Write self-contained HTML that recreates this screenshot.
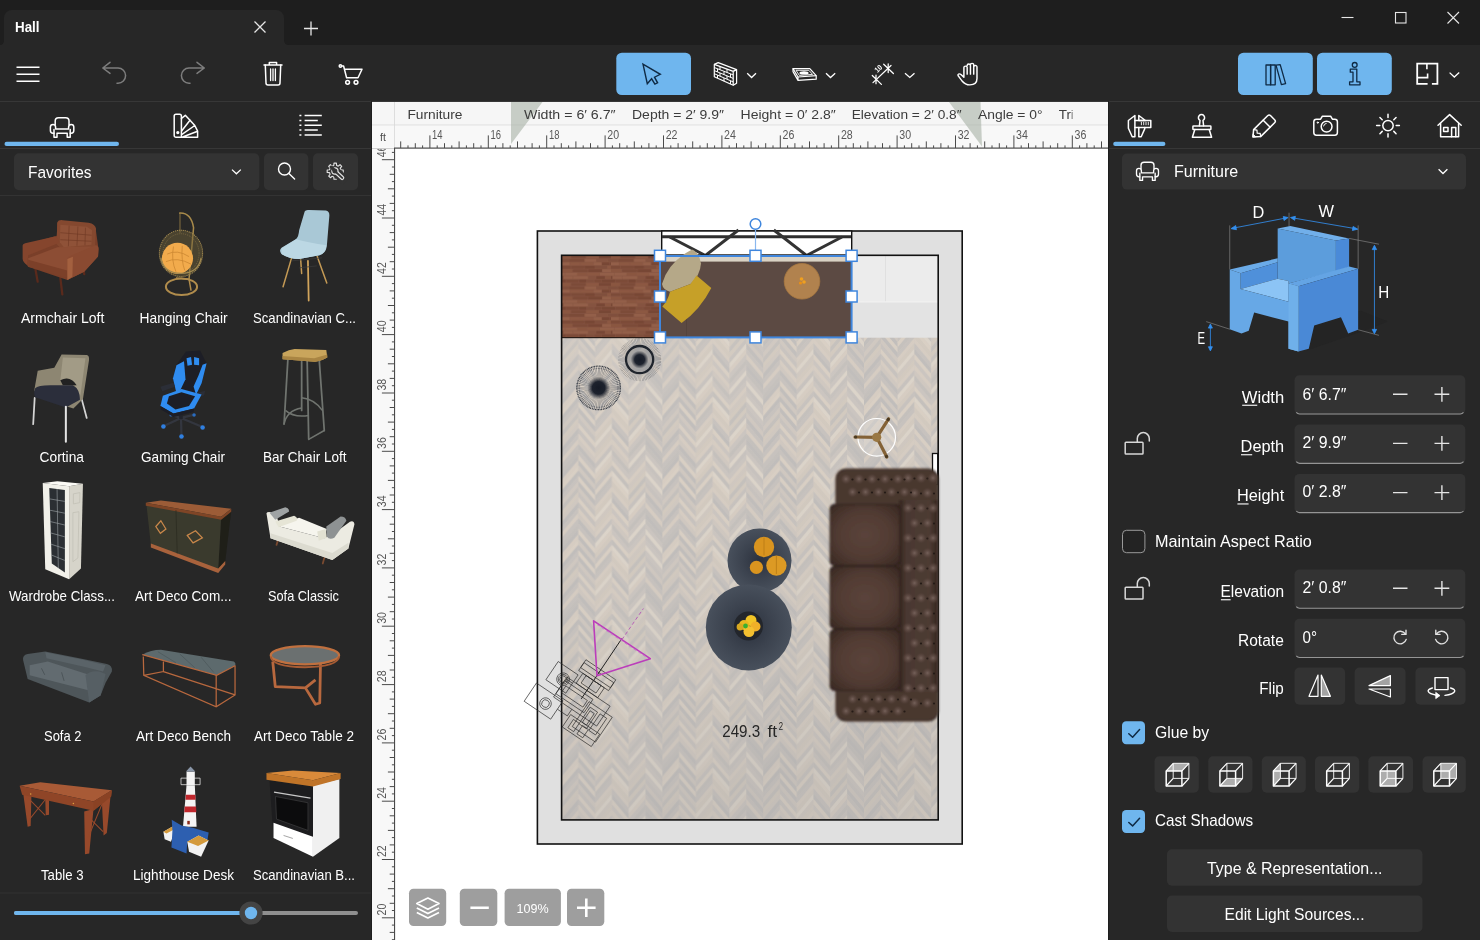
<!DOCTYPE html>
<html>
<head>
<meta charset="utf-8">
<title>Hall</title>
<style>
html,body{margin:0;padding:0;background:#272727;}
body{width:1480px;height:940px;overflow:hidden;}
svg{display:block;will-change:transform;}
svg text{font-family:"Liberation Sans",sans-serif;}
</style>
</head>
<body>
<svg width="1480" height="940" viewBox="0 0 1480 940">
<rect x="0" y="0" width="1480" height="940" fill="#272727"/>
<!-- chrome -->
<rect x="0.00" y="0.00" width="1480.00" height="45.00" fill="#1e1e1e" />
<path d="M0 45 Q4 45 4 40 V18 a8 8 0 0 1 8 -8 H276 a8 8 0 0 1 8 8 V40 Q284 45 289 45 Z" fill="#272727"/>
<text x="15.00" y="32.30" font-size="14.00" fill="#fff" font-weight="bold" textLength="24.50" lengthAdjust="spacingAndGlyphs" >Hall</text>
<path d="M254.5 21.5 l11 11 M265.5 21.5 l-11 11" stroke="#e6e6e6" stroke-width="1.3" fill="none"/>
<path d="M304 28.5 h14 M311 21.5 v14" stroke="#e6e6e6" stroke-width="1.3" fill="none"/>
<path d="M1341.5 17.5 h12" stroke="#e6e6e6" stroke-width="1.1"/>
<rect x="1395.5" y="12.5" width="10.5" height="10.5" fill="none" stroke="#e6e6e6" stroke-width="1.1"/>
<path d="M1447.5 12 l11.5 11.5 M1459 12 l-11.5 11.5" stroke="#e6e6e6" stroke-width="1.1" fill="none"/>
<rect x="0.00" y="45.00" width="1480.00" height="56.00" fill="#272727" />
<rect x="0.00" y="101.00" width="1480.00" height="1.00" fill="#373737" />
<path d="M16.5 67.3 h23 M16.5 74.3 h23 M16.5 81.3 h23" stroke="#fff" stroke-width="1.6"/>
<path d="M110 62.3 L102.8 68 L110 73.4 M103 68 H118 A7.6 7.6 0 0 1 118 83.2 H117" stroke="#7d7d7d" stroke-width="1.5" fill="none" stroke-linecap="round" stroke-linejoin="round"/>
<path d="M197 62.3 L204.3 68 L197 73.4 M204 68 H189 A7.6 7.6 0 0 0 189 83.2 H190" stroke="#7d7d7d" stroke-width="1.5" fill="none" stroke-linecap="round" stroke-linejoin="round"/>
<g stroke="#fff" stroke-width="1.5" fill="none" stroke-linejoin="round" stroke-linecap="round"><path d="M264 65 H282 M269.3 65 V62.6 H276.6 V65"/><path d="M265.3 65 L266 83 a2 2 0 0 0 2 2 H278 a2 2 0 0 0 2 -2 L280.7 65"/><path d="M270.6 69 V80.5 M273 69 V80.5 M275.4 69 V80.5" stroke-width="1.3"/></g>
<g stroke="#fff" stroke-width="1.5" fill="none" stroke-linejoin="round" stroke-linecap="round"><circle cx="340.4" cy="66" r="1.2"/><path d="M341.6 66 H343.6 L346.6 77.7 H358 L362 69.2 H344.6"/><circle cx="347.6" cy="82.3" r="1.9"/><circle cx="356" cy="82.3" r="1.9"/></g>
<rect x="616.30" y="52.70" width="74.70" height="42.30" fill="#6fb6ee" rx="5.50" />
<path d="M643 64.2 L647.3 83.7 L651.6 78.8 L654.9 84.2 L657.6 82.8 L654.5 77.2 L660.3 74.3 Z" stroke="#0f2a44" stroke-width="1.4" fill="none" stroke-linejoin="miter"/>
<g stroke="#fff" stroke-width="1.2" fill="none" stroke-linejoin="round"><path d="M714.3 64.4 L733.2 71.4 V85.3 L714.3 76.8 Z"/><path d="M714.3 64.4 L718.2 62.6 L736.6 69.6 L733.2 71.4 M736.6 69.6 V83.2 L733.2 85.3"/><path d="M714.3 67.5 L733.2 74.9 M714.3 70.6 L733.2 78.4 M714.3 73.7 L733.2 81.9" stroke-width="1"/><path d="M720 66.5 v3.2 M727 69.2 v3.2 M717.5 68.8 v3.1 M724 71.5 v3.2 M730.5 74 v3.3 M720 73 v3.1 M727 75.8 v3.2 M717.5 75.2 v3 M724 78 v3.2 M730.5 80.8 v3.2" stroke-width="1"/></g>
<path d="M747.2 73.3 L751.6 77.5 L756 73.3" stroke="#fff" stroke-width="1.3" fill="none"/>
<g stroke="#fff" stroke-width="1.2" fill="none" stroke-linejoin="round"><path d="M793 68.6 H809.8 L816.2 75.6 L798 77 Z"/><path d="M793 68.6 V71.6 L798 80.4 V77 M798 80.4 L816.2 79.2 V75.6"/><path d="M796 70.3 H808.8 L812.6 74.4 L799.3 75.4 Z" stroke-width="0.9"/><ellipse cx="804" cy="72.9" rx="4.6" ry="1.7" fill="#fff" stroke="none"/></g>
<path d="M826 73.3 L830.5 77.5 L835.2 73.3" stroke="#fff" stroke-width="1.3" fill="none"/>
<g stroke="#fff" stroke-width="1.25" fill="none" stroke-linecap="round"><path d="M873 82.6 L891 65.5"/><path d="M883.7 64.2 L893.4 73.5 M888.2 63.8 V72.6"/><path d="M872.3 75.5 L881.4 84.4 M876 75 V83.7"/></g>
<text x="0" y="0" font-size="7.6" fill="#fff" font-weight="bold" textLength="7.4" lengthAdjust="spacingAndGlyphs" transform="translate(877.6,73) rotate(-45)">10</text>
<path d="M905 73.3 L909.8 77.5 L914.5 73.3" stroke="#fff" stroke-width="1.3" fill="none"/>
<g transform="translate(967.5 74.5) scale(1.09 0.97) translate(-966.8 -74.3)" stroke="#fff" stroke-width="1.35" fill="none" stroke-linecap="round" stroke-linejoin="round"><path d="M963.5 76.5 V67.2 a1.5 1.5 0 0 1 3 0 V74 M966.5 65 a1.5 1.5 0 0 1 3 0 V74 M969.5 64.3 a1.5 1.5 0 0 1 3 0 V74 M972.5 66.5 a1.5 1.5 0 0 1 3 0 V78.5 C975.5 82.5 973.5 85 969 85 C965.5 85 963.8 83.8 961.8 81 L958.3 75.8 C957.3 74 959.3 72.8 960.8 74.3 L963.5 77.2"/></g>
<rect x="1238.00" y="52.70" width="74.80" height="42.30" fill="#6fb6ee" rx="5.50" />
<rect x="1317.00" y="52.70" width="74.80" height="42.30" fill="#6fb6ee" rx="5.50" />
<g stroke="#0f2a44" stroke-width="1.3" fill="none" stroke-linejoin="round"><rect x="1266" y="65" width="4.6" height="19.8"/><rect x="1270.6" y="65" width="4.6" height="19.8"/><path d="M1276 65.2 L1280.2 64.6 L1285.6 83.6 L1281.4 84.6 Z"/></g>
<g stroke="#0f2a44" stroke-width="1.3" fill="none" stroke-linejoin="round"><circle cx="1354.7" cy="64.9" r="2.4"/><path d="M1350.3 69.2 H1356.8 V81.8 H1360 V84.8 H1349.6 V81.8 H1353 V72.2 H1350.3 Z"/></g>
<g stroke="#fff" stroke-width="1.8" fill="none" stroke-linejoin="miter"><path d="M1431.9 83.8 H1437.4 V63.6 H1417.2 V83.8 H1427.6"/><path d="M1426.9 63.6 V69.2 M1417.2 77.6 H1427.6 V73.6" stroke-width="1.6"/></g>
<path d="M1449.6 72.6 L1454.3 77 L1459.2 72.6" stroke="#fff" stroke-width="1.3" fill="none"/>
<!-- leftp -->
<g stroke="#fff" stroke-width="1.5" fill="none" stroke-linejoin="round" stroke-linecap="round"><path d="M55.2 124.5 V121 a3.3 3.3 0 0 1 3.3 -3.3 H65.7 a3.3 3.3 0 0 1 3.3 3.3 V124.5"/><path d="M54 133.2 H53 a2.6 2.6 0 0 1 -2.6 -2.6 V127 a2.6 2.6 0 0 1 5.2 0 V129 H68.6 V127 a2.6 2.6 0 0 1 5.2 0 V130.6 a2.6 2.6 0 0 1 -2.6 2.6 H70.2"/><path d="M54 129.5 V137.3 H57 V133.2 H67.2 V137.3 H70.2 V129.5"/></g>
<g stroke="#fff" stroke-width="1.5" fill="none" stroke-linejoin="round" stroke-linecap="round"><path d="M174.2 116 a1.8 1.8 0 0 1 1.8 -1.8 H179.6 a1.8 1.8 0 0 1 1.8 1.8 V137.3 H176 a1.8 1.8 0 0 1 -1.8 -1.8 Z"/><circle cx="177.8" cy="132.6" r="0.9" fill="#fff"/><path d="M181.4 118.5 L185.3 115.3 L190 120.2 L181.6 131"/><path d="M190 120.2 L194.8 125.5 L182 134.3 M194.8 125.5 L197.6 131.2 V137.3 H181.4 M197.6 131.2 L182.6 137"/></g>
<path d="M299.4 115.6 h2 M304.6 115.6 H321.8 M299.4 120.4 h2 M304.6 120.4 H317.8 M299.4 125.3 h2 M304.6 125.3 H321.8 M299.4 130.1 h2 M304.6 130.1 H317.8 M299.4 134.9 h2 M304.6 134.9 H321.8 " stroke="#fff" stroke-width="1.5" fill="none"/>
<rect x="4.50" y="141.80" width="114.50" height="4.20" fill="#6fb6ee" rx="2.10" />
<rect x="0.00" y="148.00" width="371.00" height="1.00" fill="#373737" />
<rect x="14.00" y="153.30" width="245.30" height="37.00" fill="#333333" rx="5.00" />
<text x="28.00" y="178.00" font-size="16.30" fill="#fff" textLength="63.50" lengthAdjust="spacingAndGlyphs" >Favorites</text>
<path d="M232 169.6 L236.4 173.8 L240.8 169.6" stroke="#fff" stroke-width="1.3" fill="none"/>
<rect x="264.00" y="153.30" width="44.30" height="37.00" fill="#333333" rx="5.00" />
<g stroke="#fff" stroke-width="1.4" fill="none" stroke-linecap="round"><circle cx="284.5" cy="169" r="6"/><path d="M288.9 173.4 L294.6 179"/></g>
<rect x="313.00" y="153.30" width="45.00" height="37.00" fill="#333333" rx="5.00" />
<g stroke="#e2e2e2" fill="none" stroke-linecap="round" stroke-linejoin="round"><path d="M340.92 169.77 L343.21 170.00 L343.21 172.40 L340.92 172.63 L340.26 174.24 L341.71 176.02 L340.02 177.71 L338.24 176.26 L336.63 176.92 L336.40 179.21 L334.00 179.21 L333.77 176.92 L332.16 176.26 L330.38 177.71 L328.69 176.02 L330.14 174.24 L329.48 172.63 L327.19 172.40 L327.19 170.00 L329.48 169.77 L330.14 168.16 L328.69 166.38 L330.38 164.69 L332.16 166.14 L333.77 165.48 L334.00 163.19 L336.40 163.19 L336.63 165.48 L338.24 166.14 L340.02 164.69 L341.71 166.38 L340.26 168.16 Z" stroke-width="1.15"/><path d="M337 173 L346 181.2" stroke="#333333" stroke-width="9.5" stroke-linecap="butt"/><path d="M336.3 172.4 L342.2 177.9" stroke="#333333" stroke-width="6.4"/><path d="M336.3 172.4 L342.2 177.9" stroke="#e2e2e2" stroke-width="4.2"/><path d="M336.3 172.4 L342.2 177.9" stroke="#333333" stroke-width="1.9"/><circle cx="334.9" cy="171" r="3.1" fill="#333333" stroke-width="1.15"/><path d="M334.9 171 L330.6 166.4" stroke="#333333" stroke-width="3.3" stroke-linecap="butt"/><path d="M335.6 171.8 L337.2 173.2" stroke="#333333" stroke-width="1.9"/></g>
<rect x="0.00" y="195.00" width="371.00" height="1.00" fill="#333333" />
<text x="21.00" y="322.60" font-size="14.30" fill="#fff" textLength="83.30" lengthAdjust="spacingAndGlyphs" >Armchair Loft</text>
<text x="139.50" y="322.60" font-size="14.30" fill="#fff" textLength="88.20" lengthAdjust="spacingAndGlyphs" >Hanging Chair</text>
<text x="253.00" y="322.60" font-size="14.30" fill="#fff" textLength="103.00" lengthAdjust="spacingAndGlyphs" >Scandinavian C...</text>
<text x="39.60" y="462.10" font-size="14.30" fill="#fff" textLength="44.40" lengthAdjust="spacingAndGlyphs" >Cortina</text>
<text x="141.00" y="462.10" font-size="14.30" fill="#fff" textLength="84.00" lengthAdjust="spacingAndGlyphs" >Gaming Chair</text>
<text x="263.00" y="462.10" font-size="14.30" fill="#fff" textLength="83.50" lengthAdjust="spacingAndGlyphs" >Bar Chair Loft</text>
<text x="9.00" y="601.10" font-size="14.30" fill="#fff" textLength="106.00" lengthAdjust="spacingAndGlyphs" >Wardrobe Class...</text>
<text x="135.00" y="601.10" font-size="14.30" fill="#fff" textLength="96.50" lengthAdjust="spacingAndGlyphs" >Art Deco Com...</text>
<text x="268.00" y="601.10" font-size="14.30" fill="#fff" textLength="71.00" lengthAdjust="spacingAndGlyphs" >Sofa Classic</text>
<text x="44.00" y="740.60" font-size="14.30" fill="#fff" textLength="37.50" lengthAdjust="spacingAndGlyphs" >Sofa 2</text>
<text x="136.00" y="740.60" font-size="14.30" fill="#fff" textLength="95.00" lengthAdjust="spacingAndGlyphs" >Art Deco Bench</text>
<text x="254.00" y="740.60" font-size="14.30" fill="#fff" textLength="100.00" lengthAdjust="spacingAndGlyphs" >Art Deco Table 2</text>
<text x="41.00" y="880.10" font-size="14.30" fill="#fff" textLength="42.50" lengthAdjust="spacingAndGlyphs" >Table 3</text>
<text x="133.00" y="880.10" font-size="14.30" fill="#fff" textLength="101.00" lengthAdjust="spacingAndGlyphs" >Lighthouse Desk</text>
<text x="253.00" y="880.10" font-size="14.30" fill="#fff" textLength="102.00" lengthAdjust="spacingAndGlyphs" >Scandinavian B...</text>
<rect x="0.00" y="892.50" width="371.00" height="1.00" fill="#333333" />
<rect x="14.00" y="911.00" width="344.00" height="4.00" fill="#8f8f8f" rx="2.00" />
<rect x="14.00" y="911.00" width="237.00" height="4.00" fill="#6fb6ee" rx="2.00" />
<circle cx="251" cy="913" r="11.6" fill="#444444"/><circle cx="251" cy="913" r="6.2" fill="#6fb6ee"/>
<g transform="translate(0,195) scale(0.25138)"><g><path d="M140 290 L150 345 M240 330 L248 395 M330 270 L335 315" stroke="#5a2a1c" stroke-width="9" stroke-linecap="round"/><path d="M92 200 L226 162 L228 110 L380 130 L392 215 L390 245 L335 305 L268 338 L112 285 L92 258 Z" fill="#7a3f29"/><path d="M228 108 Q232 98 250 100 L352 110 Q380 115 382 135 L378 205 L250 222 L225 195 Z" fill="#84482f"/><path d="M240 118 L345 126 L366 140 L364 198 L254 208 L238 188 Z" fill="#8f5238"/><path d="M275 122 L272 204 M310 125 L306 202 M340 130 L338 200 M240 150 L364 160 M240 178 L364 184" stroke="#6e3824" stroke-width="2.5" fill="none"/><path d="M112 252 L228 208 L380 205 L282 252 L268 322 L112 282 Z" fill="#8c4d34"/><path d="M112 258 L268 300 L268 330 L112 285 Z" fill="#7c4029"/><path d="M90 205 Q88 195 100 192 L218 165 Q232 165 236 190 L112 240 L108 278 Q92 270 90 255 Z" fill="#85452d"/><path d="M268 252 Q270 245 285 240 L380 200 Q392 200 392 215 L390 245 L335 305 L268 338 Z" fill="#8a4a31"/><path d="M268 255 L290 246 L288 325 L268 338 Z" fill="#a3603f"/></g><g fill="none"><path d="M715 72 Q760 70 770 130 L752 335" stroke="#a88a4a" stroke-width="6" stroke-linecap="round"/><path d="M716 72 V150" stroke="#a88a4a" stroke-width="3"/><ellipse cx="722" cy="365" rx="62" ry="33" stroke="#b08c4c" stroke-width="8"/><path d="M700 330 L752 335 L760 380" stroke="#b08c4c" stroke-width="6"/><ellipse cx="720" cy="232" rx="86" ry="92" fill="#6e6038" fill-opacity="0.5" stroke="#a08850" stroke-width="4" stroke-dasharray="5 3"/><ellipse cx="720" cy="232" rx="72" ry="78" stroke="#9a8250" stroke-width="2" stroke-dasharray="4 4" /><ellipse cx="706" cy="252" rx="62" ry="62" fill="#f2ab4c"/><path d="M665 235 Q705 215 752 245 M660 265 Q705 245 760 275 M690 205 Q680 260 700 305 M725 202 Q720 260 735 300" stroke="#c98530" stroke-width="3"/><path d="M640 250 Q650 310 720 312 Q790 310 800 250" stroke="#a08850" stroke-width="5"/></g><g><path d="M1160 250 L1126 365 M1262 245 L1300 350 M1196 255 L1200 312" stroke="#c49a55" stroke-width="6" stroke-linecap="round"/><path d="M1225 262 L1228 420" stroke="#d2a55c" stroke-width="7" stroke-linecap="round"/><path d="M1160 262 L1280 250 M1190 290 L1260 282" stroke="#3a3a3a" stroke-width="3"/><path d="M1212 66 Q1215 58 1230 60 L1296 62 Q1312 64 1310 85 L1300 205 Q1296 232 1270 240 L1190 255 Q1150 255 1120 235 Q1108 222 1120 210 L1178 175 Q1188 165 1190 140 Z" fill="#a9c8d6"/><path d="M1120 212 L1178 176 Q1230 190 1298 200 Q1296 232 1270 240 L1190 255 Q1150 255 1120 235 Z" fill="#bcd8e4"/></g></g>
<g transform="translate(0,335) scale(0.25138)"><g><path d="M138 250 L132 355 M325 255 L345 330" stroke="#d4d4d4" stroke-width="7" stroke-linecap="round"/><path d="M245 78 L345 80 Q356 82 354 100 L330 255 L292 292 L162 252 L136 222 L150 142 L216 130 Z" fill="#8d8672"/><path d="M250 90 L340 92 L320 240 L290 270 L300 200 Q280 160 240 180 Z" fill="#a29b86"/><path d="M240 180 Q280 160 305 200 L250 200 Z" fill="#222"/><path d="M140 212 Q150 200 200 200 L290 200 Q318 215 318 258 L262 288 L140 248 Q132 230 140 212 Z" fill="#2b2e3b"/><path d="M262 285 L262 425" stroke="#e4e4e4" stroke-width="8" stroke-linecap="round"/></g><g><path d="M720 330 L652 362 M720 330 L722 402 M720 330 L806 366 M720 330 L770 318 M720 330 L682 318" stroke="#33363f" stroke-width="9" stroke-linecap="round"/><circle cx="650" cy="364" r="9" fill="#2f7fe0"/><circle cx="722" cy="404" r="9" fill="#2f7fe0"/><circle cx="806" cy="368" r="9" fill="#2f7fe0"/><circle cx="772" cy="318" r="7" fill="#2a6cc0"/><circle cx="680" cy="318" r="6" fill="#2a6cc0"/><path d="M720 290 V335" stroke="#22242b" stroke-width="14"/><path d="M740 66 L796 62 L822 112 L802 192 L776 244 L702 232 L688 172 L702 118 Z" fill="#1d1e26"/><path d="M702 120 L732 104 L738 176 L716 222 L702 232 L688 172 Z" fill="#2f8cf0"/><path d="M806 118 L822 112 L802 192 L780 238 L770 205 L790 160 Z" fill="#2f8cf0"/><path d="M742 92 L760 88 L764 118 L746 122 Z M772 88 L792 92 L792 120 L772 118 Z" fill="#2f8cf0"/><path d="M638 206 L690 190 L696 206 L646 224 Z M772 234 L816 222 L812 240 L776 252 Z" fill="#2b2e37"/><path d="M648 242 L722 215 L802 237 L772 292 L690 312 L638 282 Z" fill="#2f8cf0"/><path d="M672 244 L722 228 L776 244 L752 282 L698 296 L664 272 Z" fill="#1d1e26"/><path d="M638 282 L690 312 L772 292 L770 306 L690 326 L640 296 Z" fill="#1d1e26"/></g><g fill="none"><path d="M1145 100 L1130 355 M1200 105 L1200 300 M1270 100 L1290 380 M1222 105 L1228 415" stroke="#70746f" stroke-width="7" stroke-linecap="round"/><path d="M1130 355 Q1140 300 1200 290 M1228 415 L1290 380 M1135 300 Q1170 330 1228 320 M1200 250 Q1250 255 1282 300" stroke="#70746f" stroke-width="6"/><path d="M1124 72 Q1150 58 1172 56 L1298 60 L1302 90 Q1270 108 1250 106 L1124 96 Z" fill="#c9a55c"/><path d="M1124 84 L1250 92 L1302 78 L1302 90 Q1270 108 1250 106 L1124 96 Z" fill="#a98543"/></g></g>
<g transform="translate(0,475) scale(0.25138)"><g><path d="M275 45 L330 35 L322 372 L275 415 Z" fill="#d6d4ca"/><path d="M170 32 L275 45 L275 415 L180 375 Z" fill="#f1f0e9"/><path d="M170 32 L228 25 L330 35 L275 45 Z" fill="#fbfaf5"/><path d="M196 52 L258 60 L258 388 L206 352 Z" fill="#2b2f33"/><path d="M227 56 L232 370 M197 95 L258 105 M198 140 L258 152 M199 185 L258 199 M200 230 L258 246 M202 275 L258 293 M204 318 L258 340" stroke="#9aa0a4" stroke-width="2.5" fill="none"/><path d="M292 75 L318 70 L317 110 L292 115 Z M290 150 L314 146 L310 330 L290 345 Z" fill="none" stroke="#bdbbb0" stroke-width="2.5"/></g><g><path d="M880 165 L920 140 L896 345 L868 376 Z" fill="#1f1f18"/><path d="M583 122 L880 163 L868 376 L600 276 Z" fill="#3a3a2d"/><path d="M580 110 L640 101 L920 134 L880 166 Z" fill="#9c5c37"/><path d="M580 110 L880 166 L920 134 L920 146 L880 178 L580 122 Z" fill="#7f4526"/><path d="M600 272 L868 372 L896 342 L896 356 L868 390 L600 288 Z" fill="#a8623c"/><path d="M700 140 L705 312" stroke="#2a2a20" stroke-width="3"/><path d="M620 205 L640 182 L660 215 L638 232 Z M745 240 L778 222 L805 250 L768 270 Z" fill="none" stroke="#c8874a" stroke-width="5"/></g><g><path d="M1105 262 L1100 278 M1290 330 L1284 352" stroke="#7a4a30" stroke-width="7" stroke-linecap="round"/><path d="M1060 152 Q1062 146 1078 148 L1100 160 L1112 205 L1290 252 L1335 228 L1392 186 Q1408 180 1410 196 L1386 292 L1322 338 L1076 252 Z" fill="#ecebe2"/><path d="M1076 232 L1322 310 L1386 270 L1386 292 L1322 338 L1076 252 Z" fill="#dcdbd0"/><path d="M1110 195 L1190 170 L1300 215 L1290 252 L1112 205 Z" fill="#f6f5ee"/><path d="M1072 150 L1135 128 Q1150 130 1150 145 L1095 178 Z" fill="#9fa3a4"/><path d="M1298 205 L1355 165 Q1375 165 1378 182 L1330 250 Q1310 260 1300 245 Z" fill="#8e9293"/><path d="M1095 185 L1170 162 Q1186 168 1180 182 L1108 208 Z" fill="#e6e5d6"/><path d="M1262 225 L1296 215 L1300 250 L1268 262 Z" fill="#e2e1d2"/></g></g>
<g transform="translate(0,615) scale(0.25138)"><g><path d="M92 180 Q88 160 110 155 L180 145 L330 175 L425 195 Q448 200 445 225 L420 270 L400 320 L355 348 L110 255 Z" fill="#4e565a"/><path d="M118 200 L190 185 L360 240 L355 300 L118 240 Z" fill="#626b70"/><path d="M180 148 L330 178 L420 200 L410 225 L330 205 L185 172 Z" fill="#5a6368"/><path d="M340 240 Q360 220 395 225 L420 235 L400 320 L355 348 Z" fill="#565f64"/><path d="M165 212 L178 238 M245 228 L255 262" stroke="#454d51" stroke-width="3"/></g><g fill="none"><path d="M570 165 L572 240 L860 365 L935 318 L935 200 M860 235 L860 365 M650 185 L650 225 L572 240 M650 225 L935 318" stroke="#b8683e" stroke-width="5"/><path d="M566 158 Q600 138 640 138 L930 185 Q940 192 935 202 L862 240 Z" fill="#5d6a6d"/><path d="M566 158 L862 240 L935 202" stroke="#b8683e" stroke-width="5"/><path d="M628 146 L700 190 M715 155 L775 210 M800 168 L850 228" stroke="#4c575a" stroke-width="3"/></g><g fill="none"><path d="M1085 185 L1095 285 L1215 290 L1255 355 L1272 350 L1275 190 M1215 290 L1255 258 M1272 140 L1275 190" stroke="#b8683e" stroke-width="11" stroke-linejoin="round"/><ellipse cx="1213" cy="160" rx="136" ry="36" fill="#6b7070" stroke="#c0703f" stroke-width="9"/><path d="M1077 165 Q1080 205 1213 208 Q1345 205 1349 165" stroke="#a85c34" stroke-width="8"/></g></g>
<g transform="translate(0,755) scale(0.25138)"><g><path d="M92 150 L110 285 L122 282 L125 160 Z M180 175 L182 240 L195 238 L195 180 Z M335 225 L338 395 L355 392 L372 215 Z M405 180 L412 320 L425 310 L440 160 Z" fill="#97492b"/><path d="M105 165 L180 240 M182 175 L110 265 M345 240 L410 305 M408 190 L350 330" stroke="#97492b" stroke-width="4"/><path d="M78 122 L160 108 L445 140 L372 185 Z" fill="#a85a36"/><path d="M78 122 L372 185 L445 140 L442 165 L372 222 L88 158 Z" fill="#8f4527"/><path d="M372 185 L445 140 L442 165 L372 222 Z" fill="#8a4224"/><circle cx="122" cy="155" r="3" fill="#e0a040"/><circle cx="292" cy="193" r="3" fill="#e0a040"/></g><g><path d="M742 120 L775 120 L782 285 L728 285 Z" fill="#f4f4f4"/><path d="M739 158 L777 158 L778 178 L738 178 Z M735 205 L780 205 L781 228 L733 228 Z" fill="#c0272d"/><path d="M720 92 H796 V118 H720 Z" fill="none" stroke="#e8e8e8" stroke-width="3"/><path d="M742 66 L775 66 L775 120 L742 120 Z" fill="#f4f4f4"/><path d="M740 66 L758 46 L777 66 Z" fill="#8a96a8"/><path d="M745 262 h10 v14 h-10 Z" fill="#8a2a1a"/><path d="M650 305 L690 282 L700 292 L680 345 L655 335 Z" fill="#f2f2f2"/><path d="M650 305 L690 282 L700 292 L662 312 Z" fill="#d49a3c"/><path d="M683 258 L722 280 L770 290 L830 308 L825 340 L745 345 L742 392 L682 368 L686 300 Z" fill="#2d5fb0"/><path d="M745 345 L790 320 L830 340 L800 405 L752 385 Z" fill="#f2f2f2"/><path d="M745 345 L790 320 L830 340 L788 362 Z" fill="#d49a3c"/></g><g><path d="M1245 120 L1350 95 L1350 330 L1245 405 Z" fill="#f0f0f0"/><path d="M1072 100 L1245 125 L1245 405 L1088 330 Z" fill="#1d1d1f"/><path d="M1088 270 L1245 325 L1245 405 L1088 330 Z" fill="#ffffff"/><path d="M1060 72 L1165 62 L1355 72 L1245 100 Z" fill="#d98a3a"/><path d="M1060 72 L1245 100 L1355 72 L1355 95 L1245 125 L1060 98 Z" fill="#c07428"/><path d="M1090 148 L1235 172" stroke="#c8c8c8" stroke-width="5"/><path d="M1096 165 L1225 190 L1225 300 L1100 255 Z" fill="#0c0c0d" stroke="#3a3a3c" stroke-width="3"/><path d="M1128 320 L1165 332" stroke="#888" stroke-width="3"/></g></g>
<!-- canvas -->
<defs>
<pattern id="herr" x="561.6" y="338" width="100.80" height="74.20" patternUnits="userSpaceOnUse"><rect width="100.80" height="74.20" fill="#d0c9c2"/><polygon points="0.00,-6.50 16.80,-26.50 16.80,-21.20 0.00,-1.20" fill="#d7cdc2"/><polygon points="0.00,-1.20 16.80,-21.20 16.80,-15.90 0.00,4.10" fill="#dad0c4"/><polygon points="0.00,4.10 16.80,-15.90 16.80,-10.60 0.00,9.40" fill="#c0bdbb"/><polygon points="0.00,9.40 16.80,-10.60 16.80,-5.30 0.00,14.70" fill="#c7c2be"/><polygon points="0.00,14.70 16.80,-5.30 16.80,0.00 0.00,20.00" fill="#d0c8c0"/><polygon points="0.00,20.00 16.80,0.00 16.80,5.30 0.00,25.30" fill="#c4c0bc"/><polygon points="0.00,25.30 16.80,5.30 16.80,10.60 0.00,30.60" fill="#d3cabf"/><polygon points="0.00,30.60 16.80,10.60 16.80,15.90 0.00,35.90" fill="#d0c8c0"/><polygon points="0.00,35.90 16.80,15.90 16.80,21.20 0.00,41.20" fill="#c0bdbb"/><polygon points="0.00,41.20 16.80,21.20 16.80,26.50 0.00,46.50" fill="#c7c2be"/><polygon points="0.00,46.50 16.80,26.50 16.80,31.80 0.00,51.80" fill="#d7cdc2"/><polygon points="0.00,51.80 16.80,31.80 16.80,37.10 0.00,57.10" fill="#c7c2be"/><polygon points="0.00,57.10 16.80,37.10 16.80,42.40 0.00,62.40" fill="#c4c0bc"/><polygon points="0.00,62.40 16.80,42.40 16.80,47.70 0.00,67.70" fill="#c0bdbb"/><polygon points="0.00,67.70 16.80,47.70 16.80,53.00 0.00,73.00" fill="#d7cdc2"/><polygon points="0.00,73.00 16.80,53.00 16.80,58.30 0.00,78.30" fill="#dad0c4"/><polygon points="0.00,78.30 16.80,58.30 16.80,63.60 0.00,83.60" fill="#c0bdbb"/><polygon points="0.00,83.60 16.80,63.60 16.80,68.90 0.00,88.90" fill="#c7c2be"/><polygon points="0.00,88.90 16.80,68.90 16.80,74.20 0.00,94.20" fill="#d0c8c0"/><polygon points="0.00,94.20 16.80,74.20 16.80,79.50 0.00,99.50" fill="#c4c0bc"/><polygon points="16.80,-26.50 33.60,-6.50 33.60,-1.20 16.80,-21.20" fill="#c0bdbb"/><polygon points="16.80,-21.20 33.60,-1.20 33.60,4.10 16.80,-15.90" fill="#d0c8c0"/><polygon points="16.80,-15.90 33.60,4.10 33.60,9.40 16.80,-10.60" fill="#c0bdbb"/><polygon points="16.80,-10.60 33.60,9.40 33.60,14.70 16.80,-5.30" fill="#dad0c4"/><polygon points="16.80,-5.30 33.60,14.70 33.60,20.00 16.80,0.00" fill="#c0bdbb"/><polygon points="16.80,0.00 33.60,20.00 33.60,25.30 16.80,5.30" fill="#d0c8c0"/><polygon points="16.80,5.30 33.60,25.30 33.60,30.60 16.80,10.60" fill="#c7c2be"/><polygon points="16.80,10.60 33.60,30.60 33.60,35.90 16.80,15.90" fill="#dad0c4"/><polygon points="16.80,15.90 33.60,35.90 33.60,41.20 16.80,21.20" fill="#c7c2be"/><polygon points="16.80,21.20 33.60,41.20 33.60,46.50 16.80,26.50" fill="#d7cdc2"/><polygon points="16.80,26.50 33.60,46.50 33.60,51.80 16.80,31.80" fill="#d0c8c0"/><polygon points="16.80,31.80 33.60,51.80 33.60,57.10 16.80,37.10" fill="#c0bdbb"/><polygon points="16.80,37.10 33.60,57.10 33.60,62.40 16.80,42.40" fill="#c7c2be"/><polygon points="16.80,42.40 33.60,62.40 33.60,67.70 16.80,47.70" fill="#dad0c4"/><polygon points="16.80,47.70 33.60,67.70 33.60,73.00 16.80,53.00" fill="#c0bdbb"/><polygon points="16.80,53.00 33.60,73.00 33.60,78.30 16.80,58.30" fill="#d0c8c0"/><polygon points="16.80,58.30 33.60,78.30 33.60,83.60 16.80,63.60" fill="#c0bdbb"/><polygon points="16.80,63.60 33.60,83.60 33.60,88.90 16.80,68.90" fill="#dad0c4"/><polygon points="16.80,68.90 33.60,88.90 33.60,94.20 16.80,74.20" fill="#c0bdbb"/><polygon points="16.80,74.20 33.60,94.20 33.60,99.50 16.80,79.50" fill="#d0c8c0"/><polygon points="33.60,-6.50 50.40,-26.50 50.40,-21.20 33.60,-1.20" fill="#d3cabf"/><polygon points="33.60,-1.20 50.40,-21.20 50.40,-15.90 33.60,4.10" fill="#c7c2be"/><polygon points="33.60,4.10 50.40,-15.90 50.40,-10.60 33.60,9.40" fill="#dad0c4"/><polygon points="33.60,9.40 50.40,-10.60 50.40,-5.30 33.60,14.70" fill="#c4c0bc"/><polygon points="33.60,14.70 50.40,-5.30 50.40,0.00 33.60,20.00" fill="#c7c2be"/><polygon points="33.60,20.00 50.40,0.00 50.40,5.30 33.60,25.30" fill="#d7cdc2"/><polygon points="33.60,25.30 50.40,5.30 50.40,10.60 33.60,30.60" fill="#d3cabf"/><polygon points="33.60,30.60 50.40,10.60 50.40,15.90 33.60,35.90" fill="#ddd5ca"/><polygon points="33.60,35.90 50.40,15.90 50.40,21.20 33.60,41.20" fill="#d0c8c0"/><polygon points="33.60,41.20 50.40,21.20 50.40,26.50 33.60,46.50" fill="#d3cabf"/><polygon points="33.60,46.50 50.40,26.50 50.40,31.80 33.60,51.80" fill="#d7cdc2"/><polygon points="33.60,51.80 50.40,31.80 50.40,37.10 33.60,57.10" fill="#c7c2be"/><polygon points="33.60,57.10 50.40,37.10 50.40,42.40 33.60,62.40" fill="#ddd5ca"/><polygon points="33.60,62.40 50.40,42.40 50.40,47.70 33.60,67.70" fill="#d7cdc2"/><polygon points="33.60,67.70 50.40,47.70 50.40,53.00 33.60,73.00" fill="#d3cabf"/><polygon points="33.60,73.00 50.40,53.00 50.40,58.30 33.60,78.30" fill="#c7c2be"/><polygon points="33.60,78.30 50.40,58.30 50.40,63.60 33.60,83.60" fill="#dad0c4"/><polygon points="33.60,83.60 50.40,63.60 50.40,68.90 33.60,88.90" fill="#c4c0bc"/><polygon points="33.60,88.90 50.40,68.90 50.40,74.20 33.60,94.20" fill="#c7c2be"/><polygon points="33.60,94.20 50.40,74.20 50.40,79.50 33.60,99.50" fill="#d7cdc2"/><polygon points="50.40,-26.50 67.20,-6.50 67.20,-1.20 50.40,-21.20" fill="#dad0c4"/><polygon points="50.40,-21.20 67.20,-1.20 67.20,4.10 50.40,-15.90" fill="#c4c0bc"/><polygon points="50.40,-15.90 67.20,4.10 67.20,9.40 50.40,-10.60" fill="#ddd5ca"/><polygon points="50.40,-10.60 67.20,9.40 67.20,14.70 50.40,-5.30" fill="#dad0c4"/><polygon points="50.40,-5.30 67.20,14.70 67.20,20.00 50.40,0.00" fill="#d3cabf"/><polygon points="50.40,0.00 67.20,20.00 67.20,25.30 50.40,5.30" fill="#d7cdc2"/><polygon points="50.40,5.30 67.20,25.30 67.20,30.60 50.40,10.60" fill="#c7c2be"/><polygon points="50.40,10.60 67.20,30.60 67.20,35.90 50.40,15.90" fill="#c0bdbb"/><polygon points="50.40,15.90 67.20,35.90 67.20,41.20 50.40,21.20" fill="#dad0c4"/><polygon points="50.40,21.20 67.20,41.20 67.20,46.50 50.40,26.50" fill="#cbc5c0"/><polygon points="50.40,26.50 67.20,46.50 67.20,51.80 50.40,31.80" fill="#d7cdc2"/><polygon points="50.40,31.80 67.20,51.80 67.20,57.10 50.40,37.10" fill="#d0c8c0"/><polygon points="50.40,37.10 67.20,57.10 67.20,62.40 50.40,42.40" fill="#c4c0bc"/><polygon points="50.40,42.40 67.20,62.40 67.20,67.70 50.40,47.70" fill="#cbc5c0"/><polygon points="50.40,47.70 67.20,67.70 67.20,73.00 50.40,53.00" fill="#dad0c4"/><polygon points="50.40,53.00 67.20,73.00 67.20,78.30 50.40,58.30" fill="#c4c0bc"/><polygon points="50.40,58.30 67.20,78.30 67.20,83.60 50.40,63.60" fill="#ddd5ca"/><polygon points="50.40,63.60 67.20,83.60 67.20,88.90 50.40,68.90" fill="#dad0c4"/><polygon points="50.40,68.90 67.20,88.90 67.20,94.20 50.40,74.20" fill="#d3cabf"/><polygon points="50.40,74.20 67.20,94.20 67.20,99.50 50.40,79.50" fill="#d7cdc2"/><polygon points="67.20,-6.50 84.00,-26.50 84.00,-21.20 67.20,-1.20" fill="#d7cdc2"/><polygon points="67.20,-1.20 84.00,-21.20 84.00,-15.90 67.20,4.10" fill="#d0c8c0"/><polygon points="67.20,4.10 84.00,-15.90 84.00,-10.60 67.20,9.40" fill="#d3cabf"/><polygon points="67.20,9.40 84.00,-10.60 84.00,-5.30 67.20,14.70" fill="#c4c0bc"/><polygon points="67.20,14.70 84.00,-5.30 84.00,0.00 67.20,20.00" fill="#d3cabf"/><polygon points="67.20,20.00 84.00,0.00 84.00,5.30 67.20,25.30" fill="#c7c2be"/><polygon points="67.20,25.30 84.00,5.30 84.00,10.60 67.20,30.60" fill="#ddd5ca"/><polygon points="67.20,30.60 84.00,10.60 84.00,15.90 67.20,35.90" fill="#d7cdc2"/><polygon points="67.20,35.90 84.00,15.90 84.00,21.20 67.20,41.20" fill="#cbc5c0"/><polygon points="67.20,41.20 84.00,21.20 84.00,26.50 67.20,46.50" fill="#c4c0bc"/><polygon points="67.20,46.50 84.00,26.50 84.00,31.80 67.20,51.80" fill="#cbc5c0"/><polygon points="67.20,51.80 84.00,31.80 84.00,37.10 67.20,57.10" fill="#ddd5ca"/><polygon points="67.20,57.10 84.00,37.10 84.00,42.40 67.20,62.40" fill="#c7c2be"/><polygon points="67.20,62.40 84.00,42.40 84.00,47.70 67.20,67.70" fill="#cbc5c0"/><polygon points="67.20,67.70 84.00,47.70 84.00,53.00 67.20,73.00" fill="#d7cdc2"/><polygon points="67.20,73.00 84.00,53.00 84.00,58.30 67.20,78.30" fill="#d0c8c0"/><polygon points="67.20,78.30 84.00,58.30 84.00,63.60 67.20,83.60" fill="#d3cabf"/><polygon points="67.20,83.60 84.00,63.60 84.00,68.90 67.20,88.90" fill="#c4c0bc"/><polygon points="67.20,88.90 84.00,68.90 84.00,74.20 67.20,94.20" fill="#d3cabf"/><polygon points="67.20,94.20 84.00,74.20 84.00,79.50 67.20,99.50" fill="#c7c2be"/><polygon points="84.00,-26.50 100.80,-6.50 100.80,-1.20 84.00,-21.20" fill="#c7c2be"/><polygon points="84.00,-21.20 100.80,-1.20 100.80,4.10 84.00,-15.90" fill="#cbc5c0"/><polygon points="84.00,-15.90 100.80,4.10 100.80,9.40 84.00,-10.60" fill="#ddd5ca"/><polygon points="84.00,-10.60 100.80,9.40 100.80,14.70 84.00,-5.30" fill="#cbc5c0"/><polygon points="84.00,-5.30 100.80,14.70 100.80,20.00 84.00,0.00" fill="#c7c2be"/><polygon points="84.00,0.00 100.80,20.00 100.80,25.30 84.00,5.30" fill="#d0c8c0"/><polygon points="84.00,5.30 100.80,25.30 100.80,30.60 84.00,10.60" fill="#c0bdbb"/><polygon points="84.00,10.60 100.80,30.60 100.80,35.90 84.00,15.90" fill="#c7c2be"/><polygon points="84.00,15.90 100.80,35.90 100.80,41.20 84.00,21.20" fill="#d7cdc2"/><polygon points="84.00,21.20 100.80,41.20 100.80,46.50 84.00,26.50" fill="#c4c0bc"/><polygon points="84.00,26.50 100.80,46.50 100.80,51.80 84.00,31.80" fill="#c0bdbb"/><polygon points="84.00,31.80 100.80,51.80 100.80,57.10 84.00,37.10" fill="#c4c0bc"/><polygon points="84.00,37.10 100.80,57.10 100.80,62.40 84.00,42.40" fill="#cbc5c0"/><polygon points="84.00,42.40 100.80,62.40 100.80,67.70 84.00,47.70" fill="#ddd5ca"/><polygon points="84.00,47.70 100.80,67.70 100.80,73.00 84.00,53.00" fill="#c7c2be"/><polygon points="84.00,53.00 100.80,73.00 100.80,78.30 84.00,58.30" fill="#cbc5c0"/><polygon points="84.00,58.30 100.80,78.30 100.80,83.60 84.00,63.60" fill="#ddd5ca"/><polygon points="84.00,63.60 100.80,83.60 100.80,88.90 84.00,68.90" fill="#cbc5c0"/><polygon points="84.00,68.90 100.80,88.90 100.80,94.20 84.00,74.20" fill="#c7c2be"/><polygon points="84.00,74.20 100.80,94.20 100.80,99.50 84.00,79.50" fill="#d0c8c0"/></pattern>
<filter id="soft" x="0" y="0" width="1" height="1"><feGaussianBlur stdDeviation="0.6"/></filter>
<pattern id="brick" x="561.6" y="255.3" width="49.3" height="27.4" patternUnits="userSpaceOnUse"><rect width="49.3" height="27.4" fill="#865441"/><rect x="-2.4" y="0.30" width="11.4" height="2.82" fill="#8a5640"/><rect x="9.5" y="0.30" width="14.7" height="2.82" fill="#7c4b38"/><rect x="24.8" y="0.30" width="12.1" height="2.82" fill="#8c5842"/><rect x="37.4" y="0.30" width="12.0" height="2.82" fill="#774634"/><rect x="-4.7" y="3.72" width="11.5" height="2.82" fill="#80503c"/><rect x="7.3" y="3.72" width="15.5" height="2.82" fill="#7c4b38"/><rect x="23.2" y="3.72" width="11.4" height="2.82" fill="#935f48"/><rect x="35.1" y="3.72" width="10.8" height="2.82" fill="#855340"/><rect x="46.4" y="3.72" width="14.2" height="2.82" fill="#80503c"/><rect x="-6.3" y="7.15" width="14.3" height="2.82" fill="#935f48"/><rect x="8.5" y="7.15" width="10.0" height="2.82" fill="#8c5842"/><rect x="19.0" y="7.15" width="12.5" height="2.82" fill="#8c5842"/><rect x="32.0" y="7.15" width="7.9" height="2.82" fill="#935f48"/><rect x="40.5" y="7.15" width="6.9" height="2.82" fill="#774634"/><rect x="47.8" y="7.15" width="6.8" height="2.82" fill="#774634"/><rect x="-2.7" y="10.57" width="11.9" height="2.82" fill="#7c4b38"/><rect x="9.7" y="10.57" width="12.9" height="2.82" fill="#7c4b38"/><rect x="23.1" y="10.57" width="10.1" height="2.82" fill="#774634"/><rect x="33.6" y="10.57" width="11.7" height="2.82" fill="#80503c"/><rect x="45.8" y="10.57" width="14.4" height="2.82" fill="#8c5842"/><rect x="-0.4" y="14.00" width="11.0" height="2.82" fill="#8a5640"/><rect x="11.1" y="14.00" width="15.2" height="2.82" fill="#7c4b38"/><rect x="26.8" y="14.00" width="13.5" height="2.82" fill="#774634"/><rect x="40.8" y="14.00" width="9.2" height="2.82" fill="#935f48"/><rect x="-8.3" y="17.43" width="11.7" height="2.82" fill="#935f48"/><rect x="3.8" y="17.43" width="11.8" height="2.82" fill="#935f48"/><rect x="16.1" y="17.43" width="8.6" height="2.82" fill="#8a5640"/><rect x="25.2" y="17.43" width="12.6" height="2.82" fill="#8c5842"/><rect x="38.3" y="17.43" width="14.2" height="2.82" fill="#935f48"/><rect x="-6.7" y="20.85" width="8.0" height="2.82" fill="#774634"/><rect x="1.8" y="20.85" width="9.4" height="2.82" fill="#935f48"/><rect x="11.7" y="20.85" width="14.6" height="2.82" fill="#935f48"/><rect x="26.8" y="20.85" width="7.4" height="2.82" fill="#855340"/><rect x="34.8" y="20.85" width="8.4" height="2.82" fill="#774634"/><rect x="43.7" y="20.85" width="15.4" height="2.82" fill="#8a5640"/><rect x="-2.8" y="24.27" width="7.1" height="2.82" fill="#774634"/><rect x="4.7" y="24.27" width="12.2" height="2.82" fill="#7c4b38"/><rect x="17.5" y="24.27" width="7.3" height="2.82" fill="#774634"/><rect x="25.3" y="24.27" width="7.1" height="2.82" fill="#80503c"/><rect x="32.9" y="24.27" width="6.7" height="2.82" fill="#7c4b38"/><rect x="40.0" y="24.27" width="13.4" height="2.82" fill="#774634"/></pattern>
<radialGradient id="tbl"><stop offset="0" stop-color="#2b313d"/><stop offset="0.55" stop-color="#3c434f"/><stop offset="1" stop-color="#48505c"/></radialGradient>
<linearGradient id="fade" x1="0" x2="1"><stop offset="0" stop-color="#f6f6f6" stop-opacity="0"/><stop offset="1" stop-color="#f6f6f6"/></linearGradient>
<clipPath id="cv"><rect x="372" y="149" width="22" height="791"/></clipPath>
</defs>
<rect x="372.00" y="102.00" width="736.00" height="838.00" fill="#ffffff" />
<rect x="371.00" y="101.00" width="1.00" height="839.00" fill="#1e1e1e" />
<rect x="1108.00" y="101.00" width="1.00" height="839.00" fill="#1e1e1e" />
<rect x="537.4" y="231" width="424.8" height="613" fill="#e0e0e0" stroke="#111" stroke-width="1.6"/>
<rect x="561.6" y="255.3" width="376.6" height="564.6" fill="#d0c9c2"/>
<rect x="561.6" y="255.3" width="376.6" height="564.6" fill="url(#herr)" filter="url(#soft)"/>
<linearGradient id="flg" x1="0" y1="0" x2="0.25" y2="1"><stop offset="0" stop-color="#e8e2da" stop-opacity="0.28"/><stop offset="0.45" stop-color="#c8c4c0" stop-opacity="0.05"/><stop offset="1" stop-color="#a8a6a4" stop-opacity="0.3"/></linearGradient>
<rect x="561.6" y="255.3" width="376.6" height="564.6" fill="url(#flg)"/>
<rect x="561.6" y="255.3" width="98.6" height="82.4" fill="#865441"/>
<rect x="561.6" y="255.3" width="98.6" height="82.4" fill="url(#brick)" filter="url(#soft)"/>
<rect x="561.6" y="337" width="98.6" height="1.2" fill="#2a1c16"/>
<rect x="851.6" y="255.3" width="86.6" height="46.6" fill="#ececec"/>
<rect x="851.6" y="301.9" width="86.6" height="35.8" fill="#e3e3e3"/>
<rect x="885" y="255.3" width="0.8" height="46.6" fill="#dedede"/>
<rect x="851.6" y="301.4" width="86.6" height="1" fill="#f6f6f6"/>
<rect x="661.7" y="231" width="190" height="24.3" fill="#ffffff" stroke="#111" stroke-width="1.4"/>
<path d="M662 236.8 H851 " stroke="#2e2e2e" stroke-width="3"/>
<path d="M669.7 237 L705.4 255.5 L738.5 230 M773.8 230 L806.5 255.5 L842 237" stroke="#333" stroke-width="3" fill="none"/>
<rect x="561.6" y="255.3" width="376.6" height="564.6" fill="none" stroke="#111" stroke-width="1.6"/>
<rect x="932.5" y="453.5" width="5.2" height="31" fill="#fff" stroke="#111" stroke-width="1.3"/>
<defs><radialGradient id="bk"><stop offset="0" stop-color="#161b26"/><stop offset="0.55" stop-color="#1d222d"/><stop offset="1" stop-color="#1d222d" stop-opacity="0"/></radialGradient></defs>
<g fill="none"><circle cx="598.6" cy="387.9" r="13" stroke="#2a303a" stroke-width="17" stroke-dasharray="0.32 0.82" stroke-opacity="0.6"/><circle cx="598.6" cy="387.9" r="21.8" stroke="#2a303a" stroke-width="1.3" stroke-dasharray="0.9 0.7"/><circle cx="598.6" cy="387.9" r="19.4" stroke="#2a303a" stroke-width="0.9" stroke-dasharray="0.8 0.9" stroke-opacity="0.8"/><circle cx="598.6" cy="387.9" r="11.5" fill="url(#bk)"/><circle cx="639.6" cy="359.6" r="17.6" stroke="#3a3f48" stroke-width="8" stroke-dasharray="0.3 0.95" stroke-opacity="0.6"/><circle cx="639.6" cy="359.6" r="13.6" fill="#6c7078" fill-opacity="0.42" stroke="#1f242c" stroke-width="2.3"/><circle cx="639.6" cy="359.6" r="9" fill="url(#bk)"/></g>
<circle cx="876.7" cy="437.3" r="18.8" fill="#ffffff" fill-opacity="0.18" stroke="#ffffff" stroke-width="1.2"/>
<path d="M876.7 437.3 L888.6 418.8 M876.7 437.3 L855 437 M876.7 437.3 L886.8 457" stroke="#846236" stroke-width="3.2" stroke-linecap="round"/>
<circle cx="876.7" cy="437.3" r="4.6" fill="#9a7844"/><circle cx="888.2" cy="419.4" r="1.6" fill="#4a3a22"/><circle cx="855.6" cy="437" r="1.6" fill="#4a3a22"/><circle cx="886.5" cy="456.4" r="1.6" fill="#4a3a22"/>
<defs><radialGradient id="tuft"><stop offset="0" stop-color="#75615a"/><stop offset="0.6" stop-color="#5a463f" stop-opacity="0.6"/><stop offset="1" stop-color="#47362f" stop-opacity="0"/></radialGradient><radialGradient id="cush" cx="0.5" cy="0.5" r="0.75"><stop offset="0" stop-color="#5b443b"/><stop offset="0.55" stop-color="#503a32"/><stop offset="1" stop-color="#34251f"/></radialGradient><linearGradient id="sback" x1="0" x2="1"><stop offset="0" stop-color="#34251f"/><stop offset="0.2" stop-color="#4a3931"/><stop offset="0.8" stop-color="#4d3b33"/><stop offset="1" stop-color="#33251f"/></linearGradient><filter id="sblur" x="-0.1" y="-0.1" width="1.2" height="1.2"><feGaussianBlur stdDeviation="0.8"/></filter></defs>
<g filter="url(#sblur)">
<rect x="835.5" y="468.5" width="103" height="253" rx="10" fill="#3a2b25"/>
<rect x="837" y="470" width="100.5" height="250" rx="9" fill="#48372f"/>
<rect x="899" y="500" width="38.5" height="192" fill="url(#sback)"/>
<rect x="829.6" y="504" width="71" height="62" rx="5" fill="#2f221d"/>
<rect x="830.4" y="505" width="69" height="60" rx="6" fill="url(#cush)"/>
<rect x="829.6" y="566" width="71" height="63" rx="5" fill="#2f221d"/>
<rect x="830.4" y="567" width="69" height="61" rx="6" fill="url(#cush)"/>
<rect x="829.6" y="629" width="71" height="62" rx="5" fill="#2f221d"/>
<rect x="830.4" y="630" width="69" height="60" rx="6" fill="url(#cush)"/>
</g>
<g clip-path="url(#sofaclip)"><circle cx="908.0" cy="478" r="6.2" fill="url(#tuft)"/><circle cx="914.5" cy="478.5" r="1.1" fill="#241a16"/><circle cx="921.0" cy="478" r="6.2" fill="url(#tuft)"/><circle cx="927.5" cy="478.5" r="1.1" fill="#241a16"/><circle cx="933.0" cy="478" r="6.2" fill="url(#tuft)"/><circle cx="939.5" cy="478.5" r="1.1" fill="#241a16"/><circle cx="914.5" cy="493" r="6.2" fill="url(#tuft)"/><circle cx="921.0" cy="493.5" r="1.1" fill="#241a16"/><circle cx="927.5" cy="493" r="6.2" fill="url(#tuft)"/><circle cx="934.0" cy="493.5" r="1.1" fill="#241a16"/><circle cx="908.0" cy="508" r="6.2" fill="url(#tuft)"/><circle cx="914.5" cy="508.5" r="1.1" fill="#241a16"/><circle cx="921.0" cy="508" r="6.2" fill="url(#tuft)"/><circle cx="927.5" cy="508.5" r="1.1" fill="#241a16"/><circle cx="933.0" cy="508" r="6.2" fill="url(#tuft)"/><circle cx="939.5" cy="508.5" r="1.1" fill="#241a16"/><circle cx="914.5" cy="523" r="6.2" fill="url(#tuft)"/><circle cx="921.0" cy="523.5" r="1.1" fill="#241a16"/><circle cx="927.5" cy="523" r="6.2" fill="url(#tuft)"/><circle cx="934.0" cy="523.5" r="1.1" fill="#241a16"/><circle cx="908.0" cy="538" r="6.2" fill="url(#tuft)"/><circle cx="914.5" cy="538.5" r="1.1" fill="#241a16"/><circle cx="921.0" cy="538" r="6.2" fill="url(#tuft)"/><circle cx="927.5" cy="538.5" r="1.1" fill="#241a16"/><circle cx="933.0" cy="538" r="6.2" fill="url(#tuft)"/><circle cx="939.5" cy="538.5" r="1.1" fill="#241a16"/><circle cx="914.5" cy="553" r="6.2" fill="url(#tuft)"/><circle cx="921.0" cy="553.5" r="1.1" fill="#241a16"/><circle cx="927.5" cy="553" r="6.2" fill="url(#tuft)"/><circle cx="934.0" cy="553.5" r="1.1" fill="#241a16"/><circle cx="908.0" cy="568" r="6.2" fill="url(#tuft)"/><circle cx="914.5" cy="568.5" r="1.1" fill="#241a16"/><circle cx="921.0" cy="568" r="6.2" fill="url(#tuft)"/><circle cx="927.5" cy="568.5" r="1.1" fill="#241a16"/><circle cx="933.0" cy="568" r="6.2" fill="url(#tuft)"/><circle cx="939.5" cy="568.5" r="1.1" fill="#241a16"/><circle cx="914.5" cy="583" r="6.2" fill="url(#tuft)"/><circle cx="921.0" cy="583.5" r="1.1" fill="#241a16"/><circle cx="927.5" cy="583" r="6.2" fill="url(#tuft)"/><circle cx="934.0" cy="583.5" r="1.1" fill="#241a16"/><circle cx="908.0" cy="598" r="6.2" fill="url(#tuft)"/><circle cx="914.5" cy="598.5" r="1.1" fill="#241a16"/><circle cx="921.0" cy="598" r="6.2" fill="url(#tuft)"/><circle cx="927.5" cy="598.5" r="1.1" fill="#241a16"/><circle cx="933.0" cy="598" r="6.2" fill="url(#tuft)"/><circle cx="939.5" cy="598.5" r="1.1" fill="#241a16"/><circle cx="914.5" cy="613" r="6.2" fill="url(#tuft)"/><circle cx="921.0" cy="613.5" r="1.1" fill="#241a16"/><circle cx="927.5" cy="613" r="6.2" fill="url(#tuft)"/><circle cx="934.0" cy="613.5" r="1.1" fill="#241a16"/><circle cx="908.0" cy="628" r="6.2" fill="url(#tuft)"/><circle cx="914.5" cy="628.5" r="1.1" fill="#241a16"/><circle cx="921.0" cy="628" r="6.2" fill="url(#tuft)"/><circle cx="927.5" cy="628.5" r="1.1" fill="#241a16"/><circle cx="933.0" cy="628" r="6.2" fill="url(#tuft)"/><circle cx="939.5" cy="628.5" r="1.1" fill="#241a16"/><circle cx="914.5" cy="643" r="6.2" fill="url(#tuft)"/><circle cx="921.0" cy="643.5" r="1.1" fill="#241a16"/><circle cx="927.5" cy="643" r="6.2" fill="url(#tuft)"/><circle cx="934.0" cy="643.5" r="1.1" fill="#241a16"/><circle cx="908.0" cy="658" r="6.2" fill="url(#tuft)"/><circle cx="914.5" cy="658.5" r="1.1" fill="#241a16"/><circle cx="921.0" cy="658" r="6.2" fill="url(#tuft)"/><circle cx="927.5" cy="658.5" r="1.1" fill="#241a16"/><circle cx="933.0" cy="658" r="6.2" fill="url(#tuft)"/><circle cx="939.5" cy="658.5" r="1.1" fill="#241a16"/><circle cx="914.5" cy="673" r="6.2" fill="url(#tuft)"/><circle cx="921.0" cy="673.5" r="1.1" fill="#241a16"/><circle cx="927.5" cy="673" r="6.2" fill="url(#tuft)"/><circle cx="934.0" cy="673.5" r="1.1" fill="#241a16"/><circle cx="908.0" cy="688" r="6.2" fill="url(#tuft)"/><circle cx="914.5" cy="688.5" r="1.1" fill="#241a16"/><circle cx="921.0" cy="688" r="6.2" fill="url(#tuft)"/><circle cx="927.5" cy="688.5" r="1.1" fill="#241a16"/><circle cx="933.0" cy="688" r="6.2" fill="url(#tuft)"/><circle cx="939.5" cy="688.5" r="1.1" fill="#241a16"/><circle cx="914.5" cy="703" r="6.2" fill="url(#tuft)"/><circle cx="921.0" cy="703.5" r="1.1" fill="#241a16"/><circle cx="927.5" cy="703" r="6.2" fill="url(#tuft)"/><circle cx="934.0" cy="703.5" r="1.1" fill="#241a16"/><circle cx="846.0" cy="479" r="6" fill="url(#tuft)"/><circle cx="852.5" cy="479.5" r="1.1" fill="#241a16"/><circle cx="852.5" cy="492" r="6" fill="url(#tuft)"/><circle cx="859.0" cy="492.5" r="1.1" fill="#241a16"/><circle cx="852.5" cy="699" r="6" fill="url(#tuft)"/><circle cx="859.0" cy="699.5" r="1.1" fill="#241a16"/><circle cx="846.0" cy="711" r="6" fill="url(#tuft)"/><circle cx="852.5" cy="711.5" r="1.1" fill="#241a16"/><circle cx="859.0" cy="479" r="6" fill="url(#tuft)"/><circle cx="865.5" cy="479.5" r="1.1" fill="#241a16"/><circle cx="865.5" cy="492" r="6" fill="url(#tuft)"/><circle cx="872.0" cy="492.5" r="1.1" fill="#241a16"/><circle cx="865.5" cy="699" r="6" fill="url(#tuft)"/><circle cx="872.0" cy="699.5" r="1.1" fill="#241a16"/><circle cx="859.0" cy="711" r="6" fill="url(#tuft)"/><circle cx="865.5" cy="711.5" r="1.1" fill="#241a16"/><circle cx="872.0" cy="479" r="6" fill="url(#tuft)"/><circle cx="878.5" cy="479.5" r="1.1" fill="#241a16"/><circle cx="878.5" cy="492" r="6" fill="url(#tuft)"/><circle cx="885.0" cy="492.5" r="1.1" fill="#241a16"/><circle cx="878.5" cy="699" r="6" fill="url(#tuft)"/><circle cx="885.0" cy="699.5" r="1.1" fill="#241a16"/><circle cx="872.0" cy="711" r="6" fill="url(#tuft)"/><circle cx="878.5" cy="711.5" r="1.1" fill="#241a16"/><circle cx="885.0" cy="479" r="6" fill="url(#tuft)"/><circle cx="891.5" cy="479.5" r="1.1" fill="#241a16"/><circle cx="891.5" cy="492" r="6" fill="url(#tuft)"/><circle cx="898.0" cy="492.5" r="1.1" fill="#241a16"/><circle cx="891.5" cy="699" r="6" fill="url(#tuft)"/><circle cx="898.0" cy="699.5" r="1.1" fill="#241a16"/><circle cx="885.0" cy="711" r="6" fill="url(#tuft)"/><circle cx="891.5" cy="711.5" r="1.1" fill="#241a16"/><circle cx="898.0" cy="479" r="6" fill="url(#tuft)"/><circle cx="904.5" cy="479.5" r="1.1" fill="#241a16"/><circle cx="904.5" cy="492" r="6" fill="url(#tuft)"/><circle cx="911.0" cy="492.5" r="1.1" fill="#241a16"/><circle cx="904.5" cy="699" r="6" fill="url(#tuft)"/><circle cx="911.0" cy="699.5" r="1.1" fill="#241a16"/><circle cx="898.0" cy="711" r="6" fill="url(#tuft)"/><circle cx="904.5" cy="711.5" r="1.1" fill="#241a16"/></g>
<clipPath id="sofaclip"><path d="M837 470 h100.5 v250 h-100.5 v-29 h62 v-187 h-62 Z"/></clipPath>
<circle cx="759.5" cy="560.5" r="32" fill="url(#tbl)"/>
<circle cx="748.8" cy="627.4" r="43" fill="url(#tbl)"/>
<circle cx="764" cy="547" r="10.2" fill="#d9941f"/><circle cx="776.4" cy="565.6" r="10.2" fill="#dc9a24"/><circle cx="756.4" cy="567.4" r="6.6" fill="#d9941f"/>
<path d="M764 537.5 v18 M776.4 556 v18" stroke="#b87a14" stroke-width="0.8"/>
<circle cx="748.5" cy="626" r="14.5" fill="#23262c"/>
<circle cx="751" cy="620.5" r="5.5" fill="#f2c426"/><circle cx="744" cy="625" r="5" fill="#e8b820"/><circle cx="755.5" cy="626.5" r="5" fill="#f0b028"/><circle cx="749" cy="631.5" r="5.5" fill="#f4c030"/><circle cx="740" cy="627" r="3.4" fill="#d8a820"/><circle cx="745.5" cy="626" r="2.4" fill="#38b030"/>
<g fill="none" stroke="#2a2a2a" stroke-width="0.8" stroke-opacity="0.8" transform="translate(581.3,698.8) rotate(34)"><rect x="-18" y="-35" width="36" height="13"/><rect x="-18" y="-31.5" width="36" height="6"/><rect x="-13" y="-22" width="26" height="12"/><rect x="-9" y="-22" width="18" height="9"/><rect x="-24" y="-10" width="52" height="24"/><rect x="-24" y="-6" width="34" height="16"/><rect x="-20" y="-2" width="26" height="8"/><rect x="8" y="-2" width="28" height="30"/><rect x="12" y="2" width="9" height="20"/><rect x="24" y="2" width="8" height="20"/><rect x="14" y="5" width="5" height="14"/><rect x="0" y="19" width="35" height="15"/><rect x="5" y="21.5" width="7" height="10"/><rect x="16" y="21.5" width="7" height="10"/><rect x="-40" y="-18" width="24" height="22"/><circle cx="-26" cy="-6" r="6.4"/><circle cx="-26" cy="-6" r="4.8"/><circle cx="-26" cy="-6" r="3.4"/><rect x="-46" y="12" width="32" height="22"/><circle cx="-27" cy="24" r="5.8"/><circle cx="-27" cy="24" r="3.8"/><path d="M-16 -8 H-24 M-14 22 H-2 V14"/></g>
<path d="M622 638.3 L581.3 698.8" stroke="#222" stroke-width="1"/>
<path d="M597 675.8 L593.6 620.8 L650.3 658.7 Z" fill="none" stroke="#bb3dbb" stroke-width="1.6" stroke-linejoin="round"/>
<path d="M597 624.5 L646 657" stroke="#c77ac7" stroke-width="0.9" stroke-dasharray="3 2.5"/>
<path d="M622 639.5 L643.4 608.5" stroke="#b860b8" stroke-width="1" stroke-dasharray="3.5 2.5"/>
<rect x="660" y="256" width="191.6" height="81.4" fill="#5c4a43"/>
<rect x="660" y="256" width="191.6" height="5.6" fill="#d9d2c4"/>
<rect x="686" y="262" width="1" height="75" fill="#54433c"/>
<path d="M692 249.5 Q699 252 701 263.5 Q700 276 690.5 284 L670 291.7 Q663 290 662 284 Q668 262 692 249.5 Z" fill="#b5a888"/>
<path d="M696.5 275.4 L711.3 288 Q700 310 681.6 323 L662.3 306.6 Q668 300 670 291.7 L690.5 284 Z" fill="#c6a028"/>
<circle cx="802" cy="281.3" r="17.8" fill="#b9874f" fill-opacity="0.92"/><circle cx="802" cy="281.3" r="17.8" fill="none" stroke="#a87840" stroke-width="0.8"/>
<circle cx="801.5" cy="279" r="1.8" fill="#f0a020"/><circle cx="804" cy="282" r="1.8" fill="#f0a020"/><circle cx="800.5" cy="283" r="1.6" fill="#e89018"/>
<rect x="660" y="256" width="191.6" height="81.4" fill="none" stroke="#3f86dd" stroke-width="2"/>
<path d="M755.5 229.5 V250" stroke="#8ab8ee" stroke-width="1.2"/>
<circle cx="755.5" cy="224" r="5.3" fill="#fff" stroke="#3f86dd" stroke-width="1.5"/>
<rect x="654.5" y="250.3" width="11" height="11" fill="#fff" stroke="#3f86dd" stroke-width="1.5"/>
<rect x="654.5" y="291.0" width="11" height="11" fill="#fff" stroke="#3f86dd" stroke-width="1.5"/>
<rect x="654.5" y="331.9" width="11" height="11" fill="#fff" stroke="#3f86dd" stroke-width="1.5"/>
<rect x="750.0" y="250.3" width="11" height="11" fill="#fff" stroke="#3f86dd" stroke-width="1.5"/>
<rect x="750.0" y="331.9" width="11" height="11" fill="#fff" stroke="#3f86dd" stroke-width="1.5"/>
<rect x="846.1" y="250.3" width="11" height="11" fill="#fff" stroke="#3f86dd" stroke-width="1.5"/>
<rect x="846.1" y="291.0" width="11" height="11" fill="#fff" stroke="#3f86dd" stroke-width="1.5"/>
<rect x="846.1" y="331.9" width="11" height="11" fill="#fff" stroke="#3f86dd" stroke-width="1.5"/>
<text x="722.20" y="736.90" font-size="16.30" fill="#262626" textLength="38.00" lengthAdjust="spacingAndGlyphs" >249.3</text>
<text x="767.50" y="736.90" font-size="16.30" fill="#262626" textLength="9.70" lengthAdjust="spacingAndGlyphs" >ft</text>
<text x="778.70" y="730.00" font-size="10.50" fill="#262626" textLength="4.30" lengthAdjust="spacingAndGlyphs" >2</text>
<rect x="372.00" y="102.00" width="736.00" height="23.00" fill="#f6f6f6" />
<rect x="372.00" y="124.50" width="736.00" height="1.20" fill="#dedede" />
<rect x="372.00" y="125.70" width="736.00" height="22.00" fill="#f8f8f8" />
<rect x="372.00" y="148.00" width="22.50" height="792.00" fill="#f8f8f8" />
<rect x="394.00" y="102.00" width="0.80" height="46.00" fill="#d8d8d8" />
<path d="M511 102 H542.5 L511 144 Z" fill="#aab3a8" fill-opacity="0.62"/>
<path d="M949 102 H980.5 L982 146.5 Z" fill="#aab3a8" fill-opacity="0.62"/>
<text x="407.40" y="118.90" font-size="13.60" fill="#3c3c3c" textLength="55.10" lengthAdjust="spacingAndGlyphs" >Furniture</text>
<text x="524.00" y="118.90" font-size="13.60" fill="#3c3c3c" textLength="91.60" lengthAdjust="spacingAndGlyphs" >Width = 6′ 6.7″</text>
<text x="632.00" y="118.90" font-size="13.60" fill="#3c3c3c" textLength="92.00" lengthAdjust="spacingAndGlyphs" >Depth = 2′ 9.9″</text>
<text x="740.50" y="118.90" font-size="13.60" fill="#3c3c3c" textLength="95.30" lengthAdjust="spacingAndGlyphs" >Height = 0′ 2.8″</text>
<text x="851.70" y="118.90" font-size="13.60" fill="#3c3c3c" textLength="109.90" lengthAdjust="spacingAndGlyphs" >Elevation = 2′ 0.8″</text>
<text x="978.00" y="118.90" font-size="13.60" fill="#3c3c3c" textLength="64.60" lengthAdjust="spacingAndGlyphs" >Angle = 0°</text>
<text x="1058.70" y="118.90" font-size="13.60" fill="#3c3c3c" textLength="26.30" lengthAdjust="spacingAndGlyphs" >Trim</text>
<rect x="1070.00" y="103.00" width="5.00" height="21.00" fill="url(#fade)" />
<rect x="1074.00" y="103.00" width="33.00" height="21.00" fill="#f6f6f6" />
<path d="M400.7 148 v-6.6 M408.0 148 v-2.6 M415.3 148 v-4.8 M422.6 148 v-2.6 M429.9 148 v-12.6 M437.2 148 v-2.6 M444.5 148 v-4.8 M451.8 148 v-2.6 M459.1 148 v-6.6 M466.4 148 v-2.6 M473.7 148 v-4.8 M481.0 148 v-2.6 M488.3 148 v-12.6 M495.6 148 v-2.6 M502.9 148 v-4.8 M510.2 148 v-2.6 M517.5 148 v-6.6 M524.8 148 v-2.6 M532.1 148 v-4.8 M539.4 148 v-2.6 M546.7 148 v-12.6 M554.0 148 v-2.6 M561.3 148 v-4.8 M568.6 148 v-2.6 M575.9 148 v-6.6 M583.2 148 v-2.6 M590.5 148 v-4.8 M597.8 148 v-2.6 M605.1 148 v-12.6 M612.4 148 v-2.6 M619.7 148 v-4.8 M627.0 148 v-2.6 M634.3 148 v-6.6 M641.6 148 v-2.6 M648.9 148 v-4.8 M656.2 148 v-2.6 M663.5 148 v-12.6 M670.8 148 v-2.6 M678.1 148 v-4.8 M685.4 148 v-2.6 M692.7 148 v-6.6 M700.0 148 v-2.6 M707.3 148 v-4.8 M714.6 148 v-2.6 M721.9 148 v-12.6 M729.2 148 v-2.6 M736.5 148 v-4.8 M743.8 148 v-2.6 M751.1 148 v-6.6 M758.4 148 v-2.6 M765.7 148 v-4.8 M773.0 148 v-2.6 M780.3 148 v-12.6 M787.6 148 v-2.6 M794.9 148 v-4.8 M802.2 148 v-2.6 M809.5 148 v-6.6 M816.8 148 v-2.6 M824.1 148 v-4.8 M831.4 148 v-2.6 M838.7 148 v-12.6 M846.0 148 v-2.6 M853.3 148 v-4.8 M860.6 148 v-2.6 M867.9 148 v-6.6 M875.2 148 v-2.6 M882.5 148 v-4.8 M889.8 148 v-2.6 M897.1 148 v-12.6 M904.4 148 v-2.6 M911.7 148 v-4.8 M919.0 148 v-2.6 M926.3 148 v-6.6 M933.6 148 v-2.6 M940.9 148 v-4.8 M948.2 148 v-2.6 M955.5 148 v-12.6 M962.8 148 v-2.6 M970.1 148 v-4.8 M977.4 148 v-2.6 M984.7 148 v-6.6 M992.0 148 v-2.6 M999.3 148 v-4.8 M1006.6 148 v-2.6 M1013.9 148 v-12.6 M1021.2 148 v-2.6 M1028.5 148 v-4.8 M1035.8 148 v-2.6 M1043.1 148 v-6.6 M1050.4 148 v-2.6 M1057.7 148 v-4.8 M1065.0 148 v-2.6 M1072.3 148 v-12.6 M1079.6 148 v-2.6 M1086.9 148 v-4.8 M1094.2 148 v-2.6 M1101.5 148 v-6.6 " stroke="#4a4a4a" stroke-width="1"/>
<rect x="394.00" y="147.50" width="714.00" height="1.20" fill="#4a4a4a" />
<text x="432.10" y="138.90" font-size="11.90" fill="#585858" textLength="10.50" lengthAdjust="spacingAndGlyphs" >14</text>
<text x="490.50" y="138.90" font-size="11.90" fill="#585858" textLength="10.50" lengthAdjust="spacingAndGlyphs" >16</text>
<text x="548.90" y="138.90" font-size="11.90" fill="#585858" textLength="10.50" lengthAdjust="spacingAndGlyphs" >18</text>
<text x="607.30" y="138.90" font-size="11.90" fill="#585858" textLength="11.80" lengthAdjust="spacingAndGlyphs" >20</text>
<text x="665.70" y="138.90" font-size="11.90" fill="#585858" textLength="11.80" lengthAdjust="spacingAndGlyphs" >22</text>
<text x="724.10" y="138.90" font-size="11.90" fill="#585858" textLength="11.80" lengthAdjust="spacingAndGlyphs" >24</text>
<text x="782.50" y="138.90" font-size="11.90" fill="#585858" textLength="11.80" lengthAdjust="spacingAndGlyphs" >26</text>
<text x="840.90" y="138.90" font-size="11.90" fill="#585858" textLength="11.80" lengthAdjust="spacingAndGlyphs" >28</text>
<text x="899.30" y="138.90" font-size="11.90" fill="#585858" textLength="11.80" lengthAdjust="spacingAndGlyphs" >30</text>
<text x="957.70" y="138.90" font-size="11.90" fill="#585858" textLength="11.80" lengthAdjust="spacingAndGlyphs" >32</text>
<text x="1016.10" y="138.90" font-size="11.90" fill="#585858" textLength="11.80" lengthAdjust="spacingAndGlyphs" >34</text>
<text x="1074.50" y="138.90" font-size="11.90" fill="#585858" textLength="11.80" lengthAdjust="spacingAndGlyphs" >36</text>
<text x="380.00" y="141.00" font-size="10.40" fill="#4a4a4a" textLength="5.80" lengthAdjust="spacingAndGlyphs" >ft</text>
<path d="M394.5 939.7 h-2.6 M394.5 932.4 h-4.8 M394.5 925.1 h-2.6 M394.5 917.8 h-12.6 M394.5 910.5 h-2.6 M394.5 903.3 h-4.8 M394.5 896.0 h-2.6 M394.5 888.7 h-6.6 M394.5 881.4 h-2.6 M394.5 874.1 h-4.8 M394.5 866.8 h-2.6 M394.5 859.5 h-12.6 M394.5 852.2 h-2.6 M394.5 844.9 h-4.8 M394.5 837.6 h-2.6 M394.5 830.4 h-6.6 M394.5 823.1 h-2.6 M394.5 815.8 h-4.8 M394.5 808.5 h-2.6 M394.5 801.2 h-12.6 M394.5 793.9 h-2.6 M394.5 786.6 h-4.8 M394.5 779.3 h-2.6 M394.5 772.0 h-6.6 M394.5 764.8 h-2.6 M394.5 757.5 h-4.8 M394.5 750.2 h-2.6 M394.5 742.9 h-12.6 M394.5 735.6 h-2.6 M394.5 728.3 h-4.8 M394.5 721.0 h-2.6 M394.5 713.7 h-6.6 M394.5 706.4 h-2.6 M394.5 699.1 h-4.8 M394.5 691.9 h-2.6 M394.5 684.6 h-12.6 M394.5 677.3 h-2.6 M394.5 670.0 h-4.8 M394.5 662.7 h-2.6 M394.5 655.4 h-6.6 M394.5 648.1 h-2.6 M394.5 640.8 h-4.8 M394.5 633.5 h-2.6 M394.5 626.2 h-12.6 M394.5 619.0 h-2.6 M394.5 611.7 h-4.8 M394.5 604.4 h-2.6 M394.5 597.1 h-6.6 M394.5 589.8 h-2.6 M394.5 582.5 h-4.8 M394.5 575.2 h-2.6 M394.5 567.9 h-12.6 M394.5 560.6 h-2.6 M394.5 553.3 h-4.8 M394.5 546.0 h-2.6 M394.5 538.8 h-6.6 M394.5 531.5 h-2.6 M394.5 524.2 h-4.8 M394.5 516.9 h-2.6 M394.5 509.6 h-12.6 M394.5 502.3 h-2.6 M394.5 495.0 h-4.8 M394.5 487.7 h-2.6 M394.5 480.4 h-6.6 M394.5 473.1 h-2.6 M394.5 465.9 h-4.8 M394.5 458.6 h-2.6 M394.5 451.3 h-12.6 M394.5 444.0 h-2.6 M394.5 436.7 h-4.8 M394.5 429.4 h-2.6 M394.5 422.1 h-6.6 M394.5 414.8 h-2.6 M394.5 407.5 h-4.8 M394.5 400.2 h-2.6 M394.5 393.0 h-12.6 M394.5 385.7 h-2.6 M394.5 378.4 h-4.8 M394.5 371.1 h-2.6 M394.5 363.8 h-6.6 M394.5 356.5 h-2.6 M394.5 349.2 h-4.8 M394.5 341.9 h-2.6 M394.5 334.6 h-12.6 M394.5 327.4 h-2.6 M394.5 320.1 h-4.8 M394.5 312.8 h-2.6 M394.5 305.5 h-6.6 M394.5 298.2 h-2.6 M394.5 290.9 h-4.8 M394.5 283.6 h-2.6 M394.5 276.3 h-12.6 M394.5 269.0 h-2.6 M394.5 261.7 h-4.8 M394.5 254.4 h-2.6 M394.5 247.2 h-6.6 M394.5 239.9 h-2.6 M394.5 232.6 h-4.8 M394.5 225.3 h-2.6 M394.5 218.0 h-12.6 M394.5 210.7 h-2.6 M394.5 203.4 h-4.8 M394.5 196.1 h-2.6 M394.5 188.8 h-6.6 M394.5 181.6 h-2.6 M394.5 174.3 h-4.8 M394.5 167.0 h-2.6 M394.5 159.7 h-12.6 M394.5 152.4 h-2.6 " stroke="#4a4a4a" stroke-width="1"/>
<rect x="394.00" y="148.00" width="1.10" height="792.00" fill="#4a4a4a" />
<g clip-path="url(#cv)">
<text font-size="11.9" fill="#585858" textLength="11.8" lengthAdjust="spacingAndGlyphs" transform="translate(386,915.4) rotate(-90)">20</text>
<text font-size="11.9" fill="#585858" textLength="11.8" lengthAdjust="spacingAndGlyphs" transform="translate(386,857.1) rotate(-90)">22</text>
<text font-size="11.9" fill="#585858" textLength="11.8" lengthAdjust="spacingAndGlyphs" transform="translate(386,798.8) rotate(-90)">24</text>
<text font-size="11.9" fill="#585858" textLength="11.8" lengthAdjust="spacingAndGlyphs" transform="translate(386,740.5) rotate(-90)">26</text>
<text font-size="11.9" fill="#585858" textLength="11.8" lengthAdjust="spacingAndGlyphs" transform="translate(386,682.2) rotate(-90)">28</text>
<text font-size="11.9" fill="#585858" textLength="11.8" lengthAdjust="spacingAndGlyphs" transform="translate(386,623.8) rotate(-90)">30</text>
<text font-size="11.9" fill="#585858" textLength="11.8" lengthAdjust="spacingAndGlyphs" transform="translate(386,565.5) rotate(-90)">32</text>
<text font-size="11.9" fill="#585858" textLength="11.8" lengthAdjust="spacingAndGlyphs" transform="translate(386,507.2) rotate(-90)">34</text>
<text font-size="11.9" fill="#585858" textLength="11.8" lengthAdjust="spacingAndGlyphs" transform="translate(386,448.9) rotate(-90)">36</text>
<text font-size="11.9" fill="#585858" textLength="11.8" lengthAdjust="spacingAndGlyphs" transform="translate(386,390.6) rotate(-90)">38</text>
<text font-size="11.9" fill="#585858" textLength="11.8" lengthAdjust="spacingAndGlyphs" transform="translate(386,332.2) rotate(-90)">40</text>
<text font-size="11.9" fill="#585858" textLength="11.8" lengthAdjust="spacingAndGlyphs" transform="translate(386,273.9) rotate(-90)">42</text>
<text font-size="11.9" fill="#585858" textLength="11.8" lengthAdjust="spacingAndGlyphs" transform="translate(386,215.6) rotate(-90)">44</text>
<text font-size="11.9" fill="#585858" textLength="11.8" lengthAdjust="spacingAndGlyphs" transform="translate(386,157.3) rotate(-90)">46</text>
</g>
<rect x="372.00" y="148.00" width="22.00" height="1.00" fill="#cfcfcf" />
<rect x="409.00" y="888.80" width="37.20" height="37.20" fill="#9e9e9e" rx="4.50" />
<rect x="459.80" y="888.80" width="37.50" height="37.20" fill="#9e9e9e" rx="4.50" />
<rect x="504.60" y="888.80" width="56.30" height="37.20" fill="#9e9e9e" rx="4.50" />
<rect x="567.00" y="888.80" width="37.30" height="37.20" fill="#9e9e9e" rx="4.50" />
<g stroke="#fff" stroke-width="1.7" fill="none" stroke-linejoin="round"><path d="M427.9 898 L439 903.6 L427.9 909.2 L416.8 903.6 Z"/><path d="M416.8 908 L427.9 913.6 L439 908 M416.8 912.4 L427.9 918 L439 912.4"/></g>
<path d="M470.4 907.8 H488.8 M577 907.8 H595.6 M586.3 898.5 V917.1" stroke="#fff" stroke-width="2.6"/>
<text x="516.40" y="912.70" font-size="13.20" fill="#fff" textLength="32.20" lengthAdjust="spacingAndGlyphs" >109%</text>
<!-- rightp -->
<g stroke="#fff" stroke-width="1.5" fill="none" stroke-linejoin="round" stroke-linecap="round"><path d="M1134.9 115.5 L1128.4 120.5 V128.2 L1132.2 136.7 H1134.9 Z"/><path d="M1138.8 115.5 L1145.4 120.5 H1138.8 Z"/><path d="M1134.9 120.5 H1150.8 V127.5 H1134.9"/><path d="M1138.8 127.5 V136.7 H1141.2 L1144.8 128.6 V127.5"/><path d="M1141.4 122.2 v2.6 M1143.7 122.2 v2.6 M1146 122.2 v2.6 M1148.3 122.2 v2.6" stroke-width="0.9"/></g>
<g stroke="#fff" stroke-width="1.5" fill="none" stroke-linejoin="round" stroke-linecap="round"><path d="M1199.4 125.8 L1200 120.4 a3.1 3.1 0 1 1 3 0 L1203.6 125.8"/><rect x="1192.9" y="125.9" width="18" height="3.6" rx="0.6"/><path d="M1194.8 129.5 L1192.4 137.2 H1211.6 L1209.2 129.5"/></g>
<g stroke="#fff" stroke-width="1.5" fill="none" stroke-linejoin="round" stroke-linecap="round"><path d="M1253 137 L1253.6 129.6 L1267.6 115.8 a2.2 2.2 0 0 1 3.1 0 L1274.6 119.7 a2.2 2.2 0 0 1 0 3.1 L1260.6 136.6 Z"/><path d="M1263.2 120.2 L1270.2 127.2"/><path d="M1253.6 129.6 L1257 130.2 L1257.2 133.2 L1260.2 133.4 L1260.6 136.6" stroke-width="1.2"/><path d="M1253 137 L1255.8 136.8 L1253.2 134.2 Z" fill="#fff" stroke-width="0.8"/></g>
<g stroke="#fff" stroke-width="1.5" fill="none" stroke-linejoin="round" stroke-linecap="round"><path d="M1316.4 119.2 H1320.6 L1322.4 116.2 H1330.6 L1332.4 119.2 H1334.8 a2.6 2.6 0 0 1 2.6 2.6 V132.6 a2.6 2.6 0 0 1 -2.6 2.6 H1316.4 a2.6 2.6 0 0 1 -2.6 -2.6 V121.8 a2.6 2.6 0 0 1 2.6 -2.6 Z"/><circle cx="1326.6" cy="126.6" r="5.4"/><path d="M1323.6 126 a3 3 0 0 1 2.6 -2.6" stroke-width="1"/><circle cx="1317.8" cy="122.6" r="0.7" fill="#fff" stroke-width="0.8"/></g>
<g stroke="#fff" stroke-width="1.5" fill="none" stroke-linejoin="round" stroke-linecap="round"><circle cx="1388" cy="125.6" r="5.2"/><path d="M1396.20 125.60 L1399.40 125.60 M1393.80 131.40 L1396.06 133.66 M1388.00 133.80 L1388.00 137.00 M1382.20 131.40 L1379.94 133.66 M1379.80 125.60 L1376.60 125.60 M1382.20 119.80 L1379.94 117.54 M1388.00 117.40 L1388.00 114.20 M1393.80 119.80 L1396.06 117.54 "/></g>
<g stroke="#fff" stroke-width="1.5" fill="none" stroke-linejoin="round" stroke-linecap="round"><path d="M1438 125.2 L1449.6 114.6 L1461.2 125.2"/><path d="M1440.6 123.4 V136.8 H1458.6 V123.4"/><rect x="1443.6" y="127.6" width="4.4" height="4"/><path d="M1451.6 136.8 V127.6 H1455.8 V136.8"/></g>
<rect x="1113.20" y="141.80" width="52.20" height="4.20" fill="#6fb6ee" rx="2.10" />
<rect x="1109.00" y="148.00" width="371.00" height="1.00" fill="#373737" />
<rect x="1122.00" y="153.60" width="344.00" height="36.00" fill="#333333" rx="5.00" />
<g transform="translate(1147.5 171.4) scale(0.9) translate(-1147.5 -172.6)"><g stroke="#fff" stroke-width="1.5" fill="none" stroke-linejoin="round" stroke-linecap="round"><path d="M1140.3 169.5 V165.8 a3.4 3.4 0 0 1 3.4 -3.4 H1151.3 a3.4 3.4 0 0 1 3.4 3.4 V169.5"/><path d="M1139 178.6 H1138 a2.7 2.7 0 0 1 -2.7 -2.7 V172 a2.7 2.7 0 0 1 5.4 0 V174.2 H1154.3 V172 a2.7 2.7 0 0 1 5.4 0 V175.9 a2.7 2.7 0 0 1 -2.7 2.7 H1156"/><path d="M1139 174.6 V182.6 H1142 V178.6 H1153 V182.6 H1156 V174.6"/></g></g>
<text x="1174.00" y="177.00" font-size="16.50" fill="#fff" textLength="64.20" lengthAdjust="spacingAndGlyphs" >Furniture</text>
<path d="M1438.6 169.3 L1443 173.5 L1447.4 169.3" stroke="#fff" stroke-width="1.3" fill="none"/>
<g transform="translate(1180,195) scale(0.18086)"><path d="M700 860 L990 760 L1150 700 L1000 640 L720 720 Z" fill="#1e1e1e" fill-opacity="0.28"/><path d="M275 168 V412 M603 98 V176 M985 168 V408 M935 240 L1100 272 M985 745 L1100 776 M145 700 L275 742" stroke="#8a8a8a" stroke-width="3.5" fill="none"/><path d="M540 185 L610 172 L935 240 L862 252 Z" fill="#71afea"/><path d="M540 185 L862 252 L862 422 L600 490 L600 476 L540 463 Z" fill="#5c9ddc"/><path d="M862 252 L935 240 L935 398 L862 420 Z" fill="#4a8ad8"/><path d="M275 412 L540 350 L540 372 L335 432 Z" fill="#6babe8"/><path d="M335 432 L540 372 L540 463 L335 520 Z" fill="#4f90da"/><path d="M335 520 L540 463 L600 476 L600 590 Z" fill="#8cc4f5"/><path d="M600 490 L935 396 L985 408 L655 505 Z" fill="#64a4e4"/><path d="M655 505 L985 408 L985 745 L930 766 L890 676 L742 722 L712 850 L655 866 Z" fill="#4a89d6"/><path d="M275 412 L335 432 L335 520 L600 590 L600 490 L655 505 L655 866 L600 850 L600 700 L410 650 L380 750 L340 766 L275 742 Z" fill="#67a8e6"/><path d="M600 590 L600 490 L655 505 L655 866 L600 850 Z" fill="#6fb0ea"/><g stroke="#338fee" stroke-width="4.6" fill="#338fee" stroke-linejoin="round"><path d="M290 184 L592 126" fill="none"/><path d="M282 186 L308 169 L312 192 Z"/><path d="M598 124.5 L571 119 L575 141 Z"/><path d="M620 126 L975 187" fill="none"/><path d="M611 124.5 L638 118 L634 140 Z"/><path d="M983 189 L957 174 L953 196 Z"/><path d="M1075 290 V755" fill="none"/><path d="M1075 278 L1063 302 H1087 Z"/><path d="M1075 767 L1063 743 H1087 Z"/><path d="M168 725 V850" fill="none"/><path d="M168 713 L157 736 H179 Z"/><path d="M168 862 L157 839 H179 Z"/></g></g><text x="1252.60" y="217.50" font-size="16.80" fill="#fff" textLength="11.80" lengthAdjust="spacingAndGlyphs" >D</text><text x="1318.60" y="217.20" font-size="16.80" fill="#fff" textLength="15.50" lengthAdjust="spacingAndGlyphs" >W</text><text x="1378.20" y="297.60" font-size="16.80" fill="#fff" textLength="11.00" lengthAdjust="spacingAndGlyphs" >H</text><text x="1197.40" y="343.60" font-size="16.80" fill="#fff" textLength="7.60" lengthAdjust="spacingAndGlyphs" >E</text>
<rect x="1294.5" y="375.20" width="170.8" height="39.30" rx="5" fill="#333333"/><path d="M1296.3 412.30 Q1297.6 413.90 1299.5 413.95 H1460.3 Q1462.2 413.90 1463.5 412.30" stroke="#959595" stroke-width="1.1" fill="none"/>
<rect x="1294.5" y="424.60" width="170.8" height="39.30" rx="5" fill="#333333"/><path d="M1296.3 461.70 Q1297.6 463.30 1299.5 463.35 H1460.3 Q1462.2 463.30 1463.5 461.70" stroke="#959595" stroke-width="1.1" fill="none"/>
<rect x="1294.5" y="473.90" width="170.8" height="39.30" rx="5" fill="#333333"/><path d="M1296.3 511.00 Q1297.6 512.60 1299.5 512.65 H1460.3 Q1462.2 512.60 1463.5 511.00" stroke="#959595" stroke-width="1.1" fill="none"/>
<text x="1241.80" y="402.50" font-size="16.80" fill="#fff" textLength="42.40" lengthAdjust="spacingAndGlyphs" >Width</text><rect x="1242.20" y="404.70" width="15.05" height="1.1" fill="#fff"/>
<text x="1240.60" y="452.00" font-size="16.80" fill="#fff" textLength="43.60" lengthAdjust="spacingAndGlyphs" >Depth</text><rect x="1241.00" y="454.20" width="11.20" height="1.1" fill="#fff"/>
<text x="1237.00" y="501.20" font-size="16.80" fill="#fff" textLength="47.20" lengthAdjust="spacingAndGlyphs" >Height</text><rect x="1237.40" y="503.40" width="11.19" height="1.1" fill="#fff"/>
<text x="1302.50" y="399.60" font-size="15.60" fill="#fff" textLength="43.80" lengthAdjust="spacingAndGlyphs" >6′ 6.7″</text>
<text x="1302.50" y="448.20" font-size="15.60" fill="#fff" textLength="43.80" lengthAdjust="spacingAndGlyphs" >2′ 9.9″</text>
<text x="1302.50" y="497.20" font-size="15.60" fill="#fff" textLength="43.80" lengthAdjust="spacingAndGlyphs" >0′ 2.8″</text>
<path d="M1393 394.30 h14.5 M1434.5 394.30 h14.8 M1441.9 386.90 v14.8" stroke="#e4e4e4" stroke-width="1.4" fill="none"/>
<path d="M1393 443.40 h14.5 M1434.5 443.40 h14.8 M1441.9 436.00 v14.8" stroke="#e4e4e4" stroke-width="1.4" fill="none"/>
<path d="M1393 492.60 h14.5 M1434.5 492.60 h14.8 M1441.9 485.20 v14.8" stroke="#e4e4e4" stroke-width="1.4" fill="none"/>
<g stroke="#d8d8d8" stroke-width="1.5" fill="none" stroke-linejoin="round" stroke-linecap="round"><rect x="1125.2" y="442.20" width="17.8" height="11.8" rx="0.8"/><path d="M1137.3 442.20 V438.60 a6 6 0 0 1 12 0 V441.00"/></g>
<rect x="1122.5" y="530.3" width="22.4" height="22.4" rx="4" fill="#232323" stroke="#9a9a9a" stroke-width="1"/>
<text x="1155.00" y="546.80" font-size="16.60" fill="#fff" textLength="156.80" lengthAdjust="spacingAndGlyphs" >Maintain Aspect Ratio</text>
<rect x="1294.5" y="569.60" width="170.8" height="39.20" rx="5" fill="#333333"/><path d="M1296.3 606.60 Q1297.6 608.20 1299.5 608.25 H1460.3 Q1462.2 608.20 1463.5 606.60" stroke="#959595" stroke-width="1.1" fill="none"/>
<text x="1220.50" y="597.00" font-size="16.80" fill="#fff" textLength="63.70" lengthAdjust="spacingAndGlyphs" >Elevation</text><rect x="1220.90" y="599.20" width="9.73" height="1.1" fill="#fff"/>
<text x="1302.50" y="593.30" font-size="15.60" fill="#fff" textLength="43.80" lengthAdjust="spacingAndGlyphs" >2′ 0.8″</text>
<path d="M1393 588.30 h14.5 M1434.5 588.30 h14.8 M1441.9 580.90 v14.8" stroke="#e4e4e4" stroke-width="1.4" fill="none"/>
<g stroke="#d8d8d8" stroke-width="1.5" fill="none" stroke-linejoin="round" stroke-linecap="round"><rect x="1125.2" y="587.20" width="17.8" height="11.8" rx="0.8"/><path d="M1137.3 587.20 V583.60 a6 6 0 0 1 12 0 V586.00"/></g>
<rect x="1294.5" y="618.80" width="170.8" height="39.20" rx="5" fill="#333333"/><path d="M1296.3 655.80 Q1297.6 657.40 1299.5 657.45 H1460.3 Q1462.2 657.40 1463.5 655.80" stroke="#959595" stroke-width="1.1" fill="none"/>
<text x="1238.00" y="645.80" font-size="16.80" fill="#fff" textLength="45.80" lengthAdjust="spacingAndGlyphs" >Rotate</text>
<text x="1302.50" y="642.50" font-size="15.60" fill="#fff" textLength="14.50" lengthAdjust="spacingAndGlyphs" >0°</text>
<g stroke="#e0e0e0" stroke-width="1.4" fill="none" stroke-linecap="round" stroke-linejoin="round"><path d="M1405.4 634 A6.3 6.3 0 1 0 1406.2 639.4"/><path d="M1406 630.2 V634.4 H1401.8"/><path d="M1436.4 634 A6.3 6.3 0 1 1 1435.6 639.4"/><path d="M1435.8 630.2 V634.4 H1440"/></g>
<text x="1259.30" y="693.80" font-size="16.80" fill="#fff" textLength="24.50" lengthAdjust="spacingAndGlyphs" >Flip</text>
<rect x="1294.50" y="667.60" width="50.60" height="37.20" fill="#333333" rx="5.00" />
<rect x="1354.60" y="667.60" width="51.00" height="37.20" fill="#333333" rx="5.00" />
<rect x="1415.40" y="667.60" width="50.20" height="37.20" fill="#333333" rx="5.00" />
<g stroke="#fff" stroke-width="1.2" stroke-linejoin="round"><path d="M1309 696.3 L1318 675 V696.3 Z" fill="none"/><path d="M1321.3 675 L1330.4 696.3 H1321.3 Z" fill="#fff" fill-opacity="0.55"/><path d="M1369 685.6 L1390.4 675.6 V685.6 Z" fill="#fff" fill-opacity="0.55"/><path d="M1369 689 H1390.4 V697 Z" fill="none"/></g>
<g stroke="#fff" stroke-width="1.4" fill="none" stroke-linejoin="round" stroke-linecap="round"><rect x="1435" y="677.6" width="13" height="12"/><path d="M1432.4 688 C1426 689.6 1426.4 693.6 1436.6 695.2 M1450.6 688 C1457 689.6 1456.6 693.6 1445 695.4"/><path d="M1436 692.6 L1440 695.6 L1436 698.4 Z" fill="#fff" stroke-width="0.8"/></g>
<rect x="1122.00" y="721.30" width="23.00" height="23.00" fill="#6fb6ee" rx="4.20" /><path d="M1128.8 733.80 L1132.6 737.20 L1139.6 729.60" stroke="#0f2a44" stroke-width="1.5" fill="none" stroke-linecap="round" stroke-linejoin="round"/>
<text x="1155.00" y="737.60" font-size="16.60" fill="#fff" textLength="54.20" lengthAdjust="spacingAndGlyphs" >Glue by</text>
<rect x="1154.50" y="756.30" width="44.30" height="36.40" fill="#333333" rx="5.00" />
<polygon points="1166.2,770.9 1182.0,770.9 1189.0,763.3 1173.2,763.3" fill="#fff" fill-opacity="0.6" stroke="none"/><g stroke="#fff" stroke-width="1.2" fill="none" stroke-linejoin="round"><rect x="1166.2" y="770.9" width="15.7" height="15.1" stroke-width="1.5"/><rect x="1173.2" y="763.3" width="15.7" height="15.1" stroke-width="0.9"/><path d="M1166.2 770.9 L1173.2 763.3 M1182.0 770.9 L1189.0 763.3 M1166.2 786.0 L1173.2 778.4 M1182.0 786.0 L1189.0 778.4"/></g>
<rect x="1208.20" y="756.30" width="44.30" height="36.40" fill="#333333" rx="5.00" />
<polygon points="1219.9,786.0 1235.6,786.0 1242.6,778.4 1226.9,778.4" fill="#fff" fill-opacity="0.6" stroke="none"/><g stroke="#fff" stroke-width="1.2" fill="none" stroke-linejoin="round"><rect x="1219.9" y="770.9" width="15.7" height="15.1" stroke-width="1.5"/><rect x="1226.9" y="763.3" width="15.7" height="15.1" stroke-width="0.9"/><path d="M1219.9 770.9 L1226.9 763.3 M1235.6 770.9 L1242.6 763.3 M1219.9 786.0 L1226.9 778.4 M1235.6 786.0 L1242.6 778.4"/></g>
<rect x="1261.80" y="756.30" width="44.00" height="36.40" fill="#333333" rx="5.00" />
<polygon points="1273.4,770.9 1280.4,763.3 1280.4,778.4 1273.4,786.0" fill="#fff" fill-opacity="0.6" stroke="none"/><g stroke="#fff" stroke-width="1.2" fill="none" stroke-linejoin="round"><rect x="1273.4" y="770.9" width="15.7" height="15.1" stroke-width="1.5"/><rect x="1280.4" y="763.3" width="15.7" height="15.1" stroke-width="0.9"/><path d="M1273.4 770.9 L1280.4 763.3 M1289.1 770.9 L1296.1 763.3 M1273.4 786.0 L1280.4 778.4 M1289.1 786.0 L1296.1 778.4"/></g>
<rect x="1315.00" y="756.30" width="44.20" height="36.40" fill="#333333" rx="5.00" />
<g stroke="#fff" stroke-width="1.2" fill="none" stroke-linejoin="round"><rect x="1326.7" y="770.9" width="15.7" height="15.1" stroke-width="1.5"/><rect x="1333.7" y="763.3" width="15.7" height="15.1" stroke-width="0.9"/><path d="M1326.7 770.9 L1333.7 763.3 M1342.4 770.9 L1349.4 763.3 M1326.7 786.0 L1333.7 778.4 M1342.4 786.0 L1349.4 778.4"/></g>
<rect x="1368.30" y="756.30" width="44.70" height="36.40" fill="#333333" rx="5.00" />
<polygon points="1380.2,770.9 1396.0,770.9 1396.0,786.0 1380.2,786.0" fill="#fff" fill-opacity="0.6" stroke="none"/><g stroke="#fff" stroke-width="1.2" fill="none" stroke-linejoin="round"><rect x="1380.2" y="770.9" width="15.7" height="15.1" stroke-width="1.5"/><rect x="1387.2" y="763.3" width="15.7" height="15.1" stroke-width="0.9"/><path d="M1380.2 770.9 L1387.2 763.3 M1396.0 770.9 L1403.0 763.3 M1380.2 786.0 L1387.2 778.4 M1396.0 786.0 L1403.0 778.4"/></g>
<rect x="1422.50" y="756.30" width="43.30" height="36.40" fill="#333333" rx="5.00" />
<polygon points="1440.8,763.3 1456.5,763.3 1456.5,778.4 1440.8,778.4" fill="#fff" fill-opacity="0.6" stroke="none"/><g stroke="#fff" stroke-width="1.2" fill="none" stroke-linejoin="round"><rect x="1433.8" y="770.9" width="15.7" height="15.1" stroke-width="1.5"/><rect x="1440.8" y="763.3" width="15.7" height="15.1" stroke-width="0.9"/><path d="M1433.8 770.9 L1440.8 763.3 M1449.5 770.9 L1456.5 763.3 M1433.8 786.0 L1440.8 778.4 M1449.5 786.0 L1456.5 778.4"/></g>
<rect x="1122.00" y="810.00" width="23.00" height="23.00" fill="#6fb6ee" rx="4.20" /><path d="M1128.8 822.50 L1132.6 825.90 L1139.6 818.30" stroke="#0f2a44" stroke-width="1.5" fill="none" stroke-linecap="round" stroke-linejoin="round"/>
<text x="1155.00" y="826.30" font-size="16.60" fill="#fff" textLength="98.20" lengthAdjust="spacingAndGlyphs" >Cast Shadows</text>
<rect x="1167.00" y="849.30" width="255.50" height="36.50" fill="#333333" rx="5.00" />
<text x="1207.00" y="873.80" font-size="16.60" fill="#fff" textLength="175.50" lengthAdjust="spacingAndGlyphs" >Type &amp; Representation...</text>
<rect x="1167.00" y="895.50" width="255.50" height="36.50" fill="#333333" rx="5.00" />
<text x="1224.50" y="920.00" font-size="16.60" fill="#fff" textLength="140.00" lengthAdjust="spacingAndGlyphs" >Edit Light Sources...</text>
</svg>
</body>
</html>
